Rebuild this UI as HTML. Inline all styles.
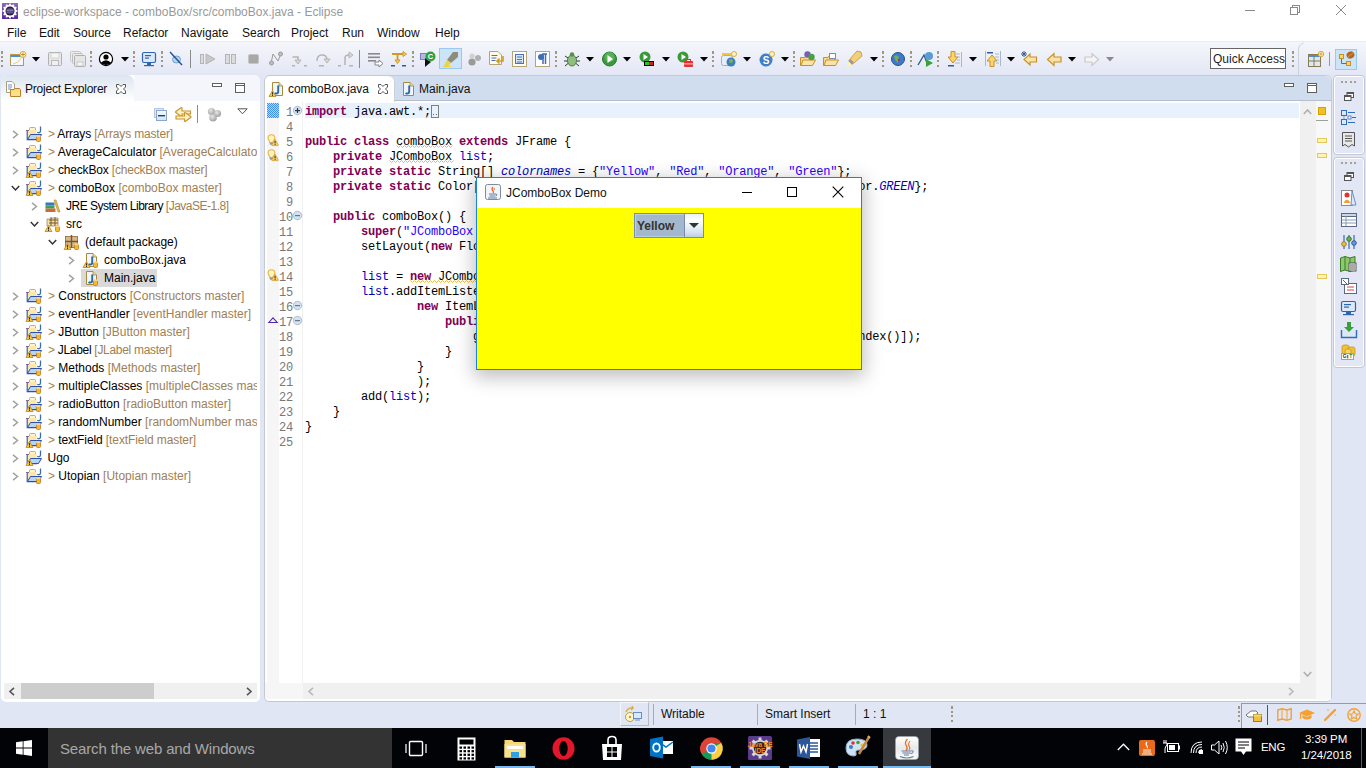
<!DOCTYPE html>
<html><head><meta charset="utf-8"><title>Eclipse</title>
<style>
*{margin:0;padding:0;box-sizing:border-box}
html,body{width:1366px;height:768px;overflow:hidden}
body{position:relative;background:#e1e6f5;font-family:"Liberation Sans",sans-serif;font-size:12px;color:#000}
.a{position:absolute}
.t{position:absolute;white-space:nowrap;line-height:15px}
svg{position:absolute;overflow:visible}
.code,.ln{font-family:"Liberation Mono",monospace;font-size:12px;letter-spacing:-0.2px;line-height:15px;white-space:pre;position:absolute}
.ln{color:#787878;text-align:right;width:30px}
.k{color:#7f0055;font-weight:bold}
.f{color:#0000c0}
.fi{color:#0000c0;font-style:italic}
.fb{color:#0000c0;font-style:italic}
.s{color:#2a00ff}
.sq{}
.tr{position:absolute;white-space:nowrap;line-height:18px;height:18px}
.dec{color:#a08052}
</style></head><body>
<div class="a" style="left:0px;top:0px;width:1366px;height:41px;background:#fff"></div>
<svg style="left:2px;top:3px" width="16" height="16" viewBox="0 0 16 16"><defs><linearGradient id="eg" x1="0" y1="0" x2="0" y2="1"><stop offset="0" stop-color="#8a6cb8"/><stop offset="1" stop-color="#5428a0"/></linearGradient></defs><rect x="0" y="0" width="16" height="16" fill="url(#eg)"/><circle cx="8" cy="8" r="6.2" fill="#fff"/><rect x="7.1" y="0.6" width="1.8" height="2.4" fill="#fff" transform="rotate(0 8 8)"/><rect x="7.1" y="0.6" width="1.8" height="2.4" fill="#fff" transform="rotate(30 8 8)"/><rect x="7.1" y="0.6" width="1.8" height="2.4" fill="#fff" transform="rotate(60 8 8)"/><rect x="7.1" y="0.6" width="1.8" height="2.4" fill="#fff" transform="rotate(90 8 8)"/><rect x="7.1" y="0.6" width="1.8" height="2.4" fill="#fff" transform="rotate(120 8 8)"/><rect x="7.1" y="0.6" width="1.8" height="2.4" fill="#fff" transform="rotate(150 8 8)"/><rect x="7.1" y="0.6" width="1.8" height="2.4" fill="#fff" transform="rotate(180 8 8)"/><rect x="7.1" y="0.6" width="1.8" height="2.4" fill="#fff" transform="rotate(210 8 8)"/><rect x="7.1" y="0.6" width="1.8" height="2.4" fill="#fff" transform="rotate(240 8 8)"/><rect x="7.1" y="0.6" width="1.8" height="2.4" fill="#fff" transform="rotate(270 8 8)"/><rect x="7.1" y="0.6" width="1.8" height="2.4" fill="#fff" transform="rotate(300 8 8)"/><rect x="7.1" y="0.6" width="1.8" height="2.4" fill="#fff" transform="rotate(330 8 8)"/><circle cx="8" cy="8" r="4.5" fill="#1a1428"/><circle cx="8" cy="8" r="3.6" fill="#4a3c70"/><rect x="4.4" y="6.6" width="7.2" height="1.1" fill="#9a8cc8"/><rect x="4.5" y="8.6" width="7" height="1" fill="#7a6cb0"/></svg>
<div class="t" style="left:23px;top:5px;color:#999">eclipse-workspace - comboBox/src/comboBox.java - Eclipse</div>
<svg style="left:1245px;top:5px" width="12" height="12" viewBox="0 0 12 12"><rect x="0" y="5" width="10" height="1" fill="#8a8a8a"/></svg>
<svg style="left:1290px;top:5px" width="12" height="12" viewBox="0 0 12 12"><rect x="2.5" y="0.5" width="7" height="7" fill="none" stroke="#8a8a8a"/><rect x="0.5" y="2.5" width="7" height="7" fill="#fff" stroke="#8a8a8a"/></svg>
<svg style="left:1336px;top:5px" width="10" height="10" viewBox="0 0 10 10"><path d="M0 0 L10 10 M10 0 L0 10" stroke="#8a8a8a" stroke-width="1"/></svg>
<div class="t" style="left:7px;top:26px;color:#111">File</div>
<div class="t" style="left:39px;top:26px;color:#111">Edit</div>
<div class="t" style="left:73px;top:26px;color:#111">Source</div>
<div class="t" style="left:123px;top:26px;color:#111">Refactor</div>
<div class="t" style="left:181px;top:26px;color:#111">Navigate</div>
<div class="t" style="left:242px;top:26px;color:#111">Search</div>
<div class="t" style="left:291px;top:26px;color:#111">Project</div>
<div class="t" style="left:342px;top:26px;color:#111">Run</div>
<div class="t" style="left:377px;top:26px;color:#111">Window</div>
<div class="t" style="left:435px;top:26px;color:#111">Help</div>
<div class="a" style="left:0px;top:41px;width:1366px;height:34px;background:linear-gradient(#f5f6fb,#e3e7f5);border-top:1px solid #ebebeb"></div>
<svg style="left:1px;top:51px" width="2" height="16" viewBox="0 0 2 16"><rect x="0" y="0" width="2" height="3" fill="#a09880"/><rect x="0" y="5" width="2" height="2" fill="#a09880"/><rect x="0" y="9" width="2" height="2" fill="#a09880"/><rect x="0" y="14" width="2" height="2" fill="#a09880"/></svg>
<svg style="left:10px;top:51px" width="16" height="16" viewBox="0 0 16 16"><rect x="0.5" y="3.5" width="13" height="11" fill="#f4f8ff" stroke="#b59a4f"/><rect x="1" y="4" width="12" height="2" fill="#4a90d9"/><path d="M3 13 Q9 12 11 7" stroke="#e9d27a" fill="none"/><circle cx="13" cy="3.5" r="3" fill="#fff6c9" stroke="#d9a93a"/><path d="M13 1.5 V5.5 M11 3.5 H15" stroke="#c8902a"/></svg>
<svg style="left:32px;top:57px" width="8" height="5" viewBox="0 0 8 5"><path d="M0 0 H8 L4 4.5 Z" fill="#000"/></svg>
<svg style="left:47px;top:51px" width="16" height="16" viewBox="0 0 16 16"><rect x="1.5" y="1.5" width="13" height="13" rx="1" fill="#e8e8e8" stroke="#b0b0b0"/><rect x="4" y="2" width="8" height="5" fill="#f6f6f6" stroke="#c4c4c4" stroke-width="0.6"/><rect x="4.5" y="9.5" width="7" height="5" fill="#f0f0f0" stroke="#b8b8b8"/></svg>
<svg style="left:70px;top:51px" width="16" height="16" viewBox="0 0 16 16"><rect x="0.5" y="0.5" width="10" height="10" rx="1" fill="#efefef" stroke="#c4c4c4"/><rect x="2.5" y="2.5" width="10" height="10" rx="1" fill="#ececec" stroke="#bdbdbd"/><rect x="4.5" y="4.5" width="11" height="11" rx="1" fill="#e6e6e6" stroke="#b0b0b0"/><rect x="7" y="11" width="6" height="4" fill="#f4f4f4" stroke="#b8b8b8" stroke-width="0.7"/></svg>
<svg style="left:90px;top:51px" width="2" height="16" viewBox="0 0 2 16"><rect x="0" y="0" width="2" height="3" fill="#a09880"/><rect x="0" y="5" width="2" height="2" fill="#a09880"/><rect x="0" y="9" width="2" height="2" fill="#a09880"/><rect x="0" y="14" width="2" height="2" fill="#a09880"/></svg>
<svg style="left:99px;top:51px" width="16" height="16" viewBox="0 0 16 16"><circle cx="7" cy="8" r="6.6" fill="#fff" stroke="#000" stroke-width="1.2"/><circle cx="7" cy="6" r="2.6" fill="#000"/><path d="M1.6 12 Q7 6.5 12.4 12 Q7 16 1.6 12Z" fill="#000"/></svg>
<svg style="left:121px;top:57px" width="8" height="5" viewBox="0 0 8 5"><path d="M0 0 H8 L4 4.5 Z" fill="#000"/></svg>
<svg style="left:133px;top:51px" width="2" height="16" viewBox="0 0 2 16"><rect x="0" y="0" width="2" height="3" fill="#a09880"/><rect x="0" y="5" width="2" height="2" fill="#a09880"/><rect x="0" y="9" width="2" height="2" fill="#a09880"/><rect x="0" y="14" width="2" height="2" fill="#a09880"/></svg>
<svg style="left:142px;top:51px" width="16" height="16" viewBox="0 0 16 16"><rect x="0.5" y="1.5" width="13" height="10" rx="1.5" fill="#dbe8f6" stroke="#2f65b0" stroke-width="1.2"/><rect x="3" y="4" width="6" height="1.2" fill="#2f65b0"/><rect x="3" y="6.5" width="4" height="1.2" fill="#2f65b0"/><rect x="5" y="12" width="4" height="2" fill="#2f65b0"/><rect x="2" y="14" width="10" height="1.2" fill="#2f65b0"/></svg>
<svg style="left:161px;top:51px" width="2" height="16" viewBox="0 0 2 16"><rect x="0" y="0" width="2" height="3" fill="#a09880"/><rect x="0" y="5" width="2" height="2" fill="#a09880"/><rect x="0" y="9" width="2" height="2" fill="#a09880"/><rect x="0" y="14" width="2" height="2" fill="#a09880"/></svg>
<svg style="left:170px;top:51px" width="16" height="16" viewBox="0 0 16 16"><ellipse cx="6.5" cy="8.5" rx="4" ry="3.5" fill="#b9d6ee" stroke="#6aa0cf"/><path d="M0 1 L12 14" stroke="#1f4f9a" stroke-width="1.4"/></svg>
<div class="a" style="left:190px;top:50px;width:1px;height:18px;background:#8c8c8c"></div>
<svg style="left:200px;top:51px" width="16" height="16" viewBox="0 0 16 16"><rect x="0.5" y="3.5" width="3" height="9" fill="#dcdcdc" stroke="#b4b4b4"/><path d="M6 3 L15 8 L6 13Z" fill="#c8c8c8" stroke="#b4b4b4"/></svg>
<svg style="left:225px;top:51px" width="16" height="16" viewBox="0 0 16 16"><rect x="0.5" y="3.5" width="4" height="9" fill="#dcdcdc" stroke="#b4b4b4"/><rect x="6.5" y="3.5" width="4" height="9" fill="#dcdcdc" stroke="#b4b4b4"/></svg>
<svg style="left:248px;top:51px" width="16" height="16" viewBox="0 0 16 16"><rect x="0.5" y="3.5" width="10" height="9" rx="1.5" fill="#a8a8a8" stroke="#c4c4c4"/></svg>
<svg style="left:269px;top:51px" width="16" height="16" viewBox="0 0 16 16"><circle cx="2.5" cy="12" r="2" fill="#c0c0c0" stroke="#999"/><circle cx="11.5" cy="3" r="2" fill="#c0c0c0" stroke="#999"/><path d="M2.5 10 L4 3 L9 10 L11 5" stroke="#999" fill="none"/></svg>
<svg style="left:292px;top:51px" width="16" height="16" viewBox="0 0 16 16"><path d="M0.5 6 H6 V10" stroke="#b4b4b4" fill="none" stroke-width="1.5"/><path d="M3 9 L6 13 L9 9Z" fill="#d8d8d8" stroke="#b4b4b4"/><rect x="0" y="14" width="3" height="1.5" fill="#b4b4b4"/><rect x="12" y="14" width="3" height="1.5" fill="#b4b4b4"/></svg>
<svg style="left:315px;top:51px" width="16" height="16" viewBox="0 0 16 16"><path d="M2 10 Q2 4 7 4 Q12 4 12 9" stroke="#b4b4b4" fill="none" stroke-width="1.5"/><path d="M9 8 L12 12 L15 8Z" fill="#d8d8d8" stroke="#b4b4b4"/><rect x="4" y="14" width="5" height="1.5" fill="#b4b4b4"/></svg>
<svg style="left:338px;top:51px" width="16" height="16" viewBox="0 0 16 16"><path d="M7 14 V7 Q7 4 11 4" stroke="#b4b4b4" fill="none" stroke-width="1.5"/><path d="M11 1 L15 4 L11 7Z" fill="#d8d8d8" stroke="#b4b4b4"/><rect x="0" y="14" width="3" height="1.5" fill="#b4b4b4"/><rect x="11" y="14" width="4" height="1.5" fill="#b4b4b4"/></svg>
<div class="a" style="left:359px;top:50px;width:1px;height:18px;background:#8c8c8c"></div>
<svg style="left:368px;top:51px" width="16" height="16" viewBox="0 0 16 16"><rect x="0" y="2" width="12" height="1.6" fill="#8a8a8a"/><rect x="0" y="5.5" width="12" height="1.6" fill="#8a8a8a"/><rect x="0" y="9" width="8" height="1.6" fill="#8a8a8a"/><path d="M7 11 H11 V9 L15 12.5 L11 16 V14 H7Z" fill="#fff" stroke="#888"/></svg>
<svg style="left:391px;top:51px" width="16" height="16" viewBox="0 0 16 16"><path d="M1 3 H12 M6.5 3 V10" stroke="#d19a25" stroke-width="1.8" fill="none"/><path d="M12 0.5 L15.5 3 L12 5.5Z" fill="#f7d36a" stroke="#d19a25"/><path d="M4 9 L6.5 12.5 L9 9Z" fill="#f7d36a" stroke="#d19a25"/><rect x="0" y="14" width="4" height="1.5" fill="#2f5c9a"/><rect x="11" y="14" width="4" height="1.5" fill="#2f5c9a"/></svg>
<svg style="left:412px;top:51px" width="2" height="16" viewBox="0 0 2 16"><rect x="0" y="0" width="2" height="3" fill="#a09880"/><rect x="0" y="5" width="2" height="2" fill="#a09880"/><rect x="0" y="9" width="2" height="2" fill="#a09880"/><rect x="0" y="14" width="2" height="2" fill="#a09880"/></svg>
<svg style="left:420px;top:51px" width="16" height="16" viewBox="0 0 16 16"><rect x="0.5" y="2.5" width="8" height="6" fill="#b5b8e6" stroke="#7f7fb6"/><path d="M5 7 L5 16 L11 11Z" fill="#111"/><circle cx="10.5" cy="5.5" r="5" fill="#2f9e44"/><text x="10.5" y="8.2" font-size="7.5" font-weight="bold" text-anchor="middle" fill="#fff" font-family="Liberation Sans">C</text></svg>
<div class="a" style="left:439px;top:48px;width:23px;height:21px;background:#cce4f7;border:1px solid #99c9ef"></div>
<svg style="left:443px;top:51px" width="16" height="16" viewBox="0 0 16 16"><path d="M15 1 L10 1 L4 9 L8 12 L15 6Z" fill="#8e8a7c"/><path d="M4 9 L8 12 L5 15 L1 15Z" fill="#f2d23c"/><path d="M0 15.5 H8" stroke="#f2d23c" stroke-width="1.2"/></svg>
<svg style="left:467px;top:51px" width="16" height="16" viewBox="0 0 16 16"><circle cx="5" cy="11" r="3.6" fill="#9a9a9a"/><circle cx="11" cy="7" r="3" fill="#b0b0b0"/><circle cx="5" cy="5" r="2.6" fill="#d0d0d0"/></svg>
<svg style="left:489px;top:51px" width="16" height="16" viewBox="0 0 16 16"><path d="M0.5 0.5 H9 L12.5 4 V13.5 H0.5Z" fill="#fffbe8" stroke="#b5a574"/><rect x="2.5" y="4" width="6" height="1" fill="#4a73b5"/><rect x="2.5" y="6.5" width="5" height="1" fill="#4a73b5"/><rect x="2.5" y="9" width="4" height="1" fill="#4a73b5"/><path d="M14 5 V10 H8 M10.5 7.5 L8 10 L10.5 12.5" stroke="#d19a25" stroke-width="1.6" fill="none"/></svg>
<svg style="left:512px;top:51px" width="16" height="16" viewBox="0 0 16 16"><rect x="0.5" y="0.5" width="14" height="15" fill="#fff" stroke="#b5a574"/><rect x="3.5" y="3.5" width="8" height="9" fill="#dbe6f6" stroke="#4a73b5"/><rect x="5" y="5.5" width="5" height="1" fill="#4a73b5"/><rect x="5" y="8" width="5" height="1" fill="#4a73b5"/><rect x="5" y="10.5" width="5" height="1" fill="#4a73b5"/></svg>
<svg style="left:535px;top:51px" width="16" height="16" viewBox="0 0 16 16"><rect x="0.5" y="0.5" width="14" height="15" fill="#fff" stroke="#b5a574"/><path d="M7 3 H12 M8 3 V13 M10.5 3 V13" stroke="#3e6cb5" stroke-width="1.5"/><circle cx="6" cy="6" r="3" fill="#3e6cb5"/></svg>
<svg style="left:555px;top:51px" width="2" height="16" viewBox="0 0 2 16"><rect x="0" y="0" width="2" height="3" fill="#a09880"/><rect x="0" y="5" width="2" height="2" fill="#a09880"/><rect x="0" y="9" width="2" height="2" fill="#a09880"/><rect x="0" y="14" width="2" height="2" fill="#a09880"/></svg>
<svg style="left:564px;top:51px" width="16" height="16" viewBox="0 0 16 16"><ellipse cx="8" cy="9.5" rx="4.5" ry="5.5" fill="#8fbf7f" stroke="#4e7f3f"/><circle cx="8" cy="3.5" r="2.2" fill="#5a8f4a"/><path d="M1 5 L4 7 M15 5 L12 7 M0 10 H3.5 M16 10 H12.5 M1 15 L4 12.5 M15 15 L12 12.5" stroke="#333" stroke-width="1"/></svg>
<svg style="left:586px;top:57px" width="8" height="5" viewBox="0 0 8 5"><path d="M0 0 H8 L4 4.5 Z" fill="#000"/></svg>
<svg style="left:602px;top:51px" width="16" height="16" viewBox="0 0 16 16"><circle cx="7.5" cy="8" r="7" fill="#3a9a3a" stroke="#2a7a2a"/><circle cx="7.5" cy="6" r="5" fill="#6cc06c" opacity="0.6"/><path d="M5.5 4 L11 8 L5.5 12Z" fill="#fff"/></svg>
<svg style="left:623px;top:57px" width="8" height="5" viewBox="0 0 8 5"><path d="M0 0 H8 L4 4.5 Z" fill="#000"/></svg>
<svg style="left:639px;top:51px" width="16" height="16" viewBox="0 0 16 16"><circle cx="6" cy="6" r="5.5" fill="#3a9a3a"/><path d="M4.5 3 L9 6 L4.5 9Z" fill="#fff"/><rect x="5" y="10" width="10" height="5" fill="#000"/><rect x="6" y="11" width="4" height="3" fill="#27c227"/><rect x="10" y="11" width="4" height="3" fill="#d32020"/></svg>
<svg style="left:662px;top:57px" width="8" height="5" viewBox="0 0 8 5"><path d="M0 0 H8 L4 4.5 Z" fill="#000"/></svg>
<svg style="left:677px;top:51px" width="16" height="16" viewBox="0 0 16 16"><circle cx="6" cy="6" r="5.5" fill="#3a9a3a"/><path d="M4.5 3 L9 6 L4.5 9Z" fill="#fff"/><rect x="7" y="10" width="9" height="6" rx="1" fill="#e53030"/><rect x="9.5" y="8.5" width="4" height="2" fill="none" stroke="#e53030"/><rect x="7" y="12.5" width="9" height="0.8" fill="#fff"/></svg>
<svg style="left:700px;top:57px" width="8" height="5" viewBox="0 0 8 5"><path d="M0 0 H8 L4 4.5 Z" fill="#000"/></svg>
<svg style="left:712px;top:51px" width="2" height="16" viewBox="0 0 2 16"><rect x="0" y="0" width="2" height="3" fill="#a09880"/><rect x="0" y="5" width="2" height="2" fill="#a09880"/><rect x="0" y="9" width="2" height="2" fill="#a09880"/><rect x="0" y="14" width="2" height="2" fill="#a09880"/></svg>
<svg style="left:721px;top:51px" width="16" height="16" viewBox="0 0 16 16"><rect x="0.5" y="4.5" width="11" height="10" rx="2" fill="#e8eef8" stroke="#9bb0cc"/><rect x="1" y="2" width="9" height="2" fill="#f0c64a"/><circle cx="10" cy="11" r="4.5" fill="#3b7fc4"/><circle cx="10" cy="10" r="2" fill="#7ab648"/><circle cx="13" cy="3" r="2.5" fill="#fff6c9" stroke="#d9a93a"/></svg>
<svg style="left:743px;top:57px" width="8" height="5" viewBox="0 0 8 5"><path d="M0 0 H8 L4 4.5 Z" fill="#000"/></svg>
<svg style="left:759px;top:51px" width="16" height="16" viewBox="0 0 16 16"><circle cx="7" cy="9" r="6.5" fill="#3f7fc8"/><text x="7" y="13" font-size="10" font-weight="bold" text-anchor="middle" fill="#fff" font-family="Liberation Sans">S</text><circle cx="13" cy="3" r="2.5" fill="#fff6c9" stroke="#d9a93a"/></svg>
<svg style="left:781px;top:57px" width="8" height="5" viewBox="0 0 8 5"><path d="M0 0 H8 L4 4.5 Z" fill="#000"/></svg>
<svg style="left:793px;top:51px" width="2" height="16" viewBox="0 0 2 16"><rect x="0" y="0" width="2" height="3" fill="#a09880"/><rect x="0" y="5" width="2" height="2" fill="#a09880"/><rect x="0" y="9" width="2" height="2" fill="#a09880"/><rect x="0" y="14" width="2" height="2" fill="#a09880"/></svg>
<svg style="left:800px;top:51px" width="16" height="16" viewBox="0 0 16 16"><path d="M0.5 6.5 H5 L6 5 H12 V14.5 H0.5Z" fill="#f7d88c" stroke="#c8902a"/><path d="M1 14.5 L3 9 H15.5 L12.5 14.5Z" fill="#fbe3a6" stroke="#c8902a"/><circle cx="7.5" cy="3.5" r="3.2" fill="#7b5eb0"/><circle cx="11.5" cy="6" r="3.2" fill="#4aa04a"/></svg>
<svg style="left:823px;top:51px" width="16" height="16" viewBox="0 0 16 16"><path d="M0.5 6.5 H5 L6 5 H12 V14.5 H0.5Z" fill="#f7d88c" stroke="#c8902a"/><path d="M1 14.5 L3 9 H15.5 L12.5 14.5Z" fill="#fbe3a6" stroke="#c8902a"/><rect x="6.5" y="2.5" width="6" height="5" fill="#fff" stroke="#7d8ea8"/></svg>
<svg style="left:846px;top:51px" width="16" height="16" viewBox="0 0 16 16"><path d="M15 1 L11 0 L4 8 L8 12 L16 5Z" fill="#f3cf7a" stroke="#c8902a" stroke-width="0.8"/><path d="M4 8 L8 12 L6 14 L2 10Z" fill="#9a9a9a"/><path d="M2 10 L6 14 L1 16Z" fill="#fff3b0"/></svg>
<svg style="left:870px;top:57px" width="8" height="5" viewBox="0 0 8 5"><path d="M0 0 H8 L4 4.5 Z" fill="#000"/></svg>
<svg style="left:882px;top:51px" width="2" height="16" viewBox="0 0 2 16"><rect x="0" y="0" width="2" height="3" fill="#a09880"/><rect x="0" y="5" width="2" height="2" fill="#a09880"/><rect x="0" y="9" width="2" height="2" fill="#a09880"/><rect x="0" y="14" width="2" height="2" fill="#a09880"/></svg>
<svg style="left:891px;top:51px" width="16" height="16" viewBox="0 0 16 16"><circle cx="7" cy="8" r="6.5" fill="#3f79c9" stroke="#29518a"/><path d="M3 5 Q6 3 8 6 Q6 9 7 12 Q4 10 3 5Z" fill="#6fb34a"/><circle cx="8" cy="9" r="1" fill="#d02020"/></svg>
<svg style="left:910px;top:51px" width="2" height="16" viewBox="0 0 2 16"><rect x="0" y="0" width="2" height="3" fill="#a09880"/><rect x="0" y="5" width="2" height="2" fill="#a09880"/><rect x="0" y="9" width="2" height="2" fill="#a09880"/><rect x="0" y="14" width="2" height="2" fill="#a09880"/></svg>
<svg style="left:918px;top:51px" width="16" height="16" viewBox="0 0 16 16"><path d="M0 14 L6 4 L9 12" stroke="#2f5c9a" stroke-width="1.4" fill="none"/><circle cx="11" cy="5" r="4" fill="#5b9bd5"/><path d="M8 8 L15 12 L8 16Z" fill="#3aa03a"/></svg>
<svg style="left:937px;top:51px" width="2" height="16" viewBox="0 0 2 16"><rect x="0" y="0" width="2" height="3" fill="#a09880"/><rect x="0" y="5" width="2" height="2" fill="#a09880"/><rect x="0" y="9" width="2" height="2" fill="#a09880"/><rect x="0" y="14" width="2" height="2" fill="#a09880"/></svg>
<svg style="left:946px;top:51px" width="16" height="16" viewBox="0 0 16 16"><path d="M5 0.5 H9 V6 H12 L7 12 L2 6 H5Z" fill="#fbd568" stroke="#c8902a"/><rect x="2" y="14" width="6" height="1.5" fill="#2f5c9a"/><path d="M10 3 H14 M11 6 H14 M11 9 H14 M9 12 H14" stroke="#a9b8cc"/><rect x="15" y="1" width="1" height="15" fill="#a9b8cc"/></svg>
<svg style="left:969px;top:57px" width="8" height="5" viewBox="0 0 8 5"><path d="M0 0 H8 L4 4.5 Z" fill="#000"/></svg>
<svg style="left:985px;top:51px" width="16" height="16" viewBox="0 0 16 16"><path d="M5 15.5 H9 V10 H12 L7 4 L2 10 H5Z" fill="#fbd568" stroke="#c8902a"/><rect x="2" y="1" width="6" height="1.5" fill="#2f5c9a"/><path d="M10 3 H14 M10 6 H14 M11 9 H14 M11 12 H14" stroke="#a9b8cc"/><rect x="0" y="0" width="1" height="15" fill="#a9b8cc"/><rect x="15" y="0" width="1" height="15" fill="#a9b8cc"/></svg>
<svg style="left:1007px;top:57px" width="8" height="5" viewBox="0 0 8 5"><path d="M0 0 H8 L4 4.5 Z" fill="#000"/></svg>
<svg style="left:1021px;top:51px" width="16" height="16" viewBox="0 0 16 16"><path d="M15.5 6 H9 V3 L3 8.5 L9 14 V11 H15.5Z" fill="#fbe3a6" stroke="#c8902a" stroke-width="1.2"/><path d="M1 1 L5 5 M5 1 L1 5 M3 0 V6 M0 3 H6" stroke="#2f5c9a"/></svg>
<svg style="left:1046px;top:51px" width="16" height="16" viewBox="0 0 16 16"><path d="M15 6 H8 V2.5 L1.5 8.5 L8 14.5 V11 H15Z" fill="#fbe3a6" stroke="#c8902a" stroke-width="1.2"/></svg>
<svg style="left:1068px;top:57px" width="8" height="5" viewBox="0 0 8 5"><path d="M0 0 H8 L4 4.5 Z" fill="#000"/></svg>
<svg style="left:1084px;top:51px" width="16" height="16" viewBox="0 0 16 16"><path d="M1 6 H8 V2.5 L14.5 8.5 L8 14.5 V11 H1Z" fill="#f4f4f4" stroke="#c8c8c8" stroke-width="1.2"/></svg>
<svg style="left:1106px;top:57px" width="8" height="5" viewBox="0 0 8 5"><path d="M0 0 H8 L4 4.5 Z" fill="#8a8a8a"/></svg>
<div class="a" style="left:1210px;top:48px;width:76px;height:21px;background:#fff;border:1px solid #666"></div>
<div class="t" style="left:1213px;top:52px;color:#222">Quick Access</div>
<svg style="left:1292px;top:51px" width="2" height="16" viewBox="0 0 2 16"><rect x="0" y="0" width="2" height="3" fill="#a09880"/><rect x="0" y="5" width="2" height="2" fill="#a09880"/><rect x="0" y="9" width="2" height="2" fill="#a09880"/><rect x="0" y="14" width="2" height="2" fill="#a09880"/></svg>
<svg style="left:1298px;top:43px" width="6" height="32" viewBox="0 0 6 32"><path d="M5.5 0 Q0.5 2 0.5 7 V32" stroke="#cdd1dc" fill="none"/></svg>
<svg style="left:1308px;top:51px" width="16" height="16" viewBox="0 0 16 16"><rect x="0.5" y="3.5" width="12" height="12" fill="#dbe8f6" stroke="#8a7a50"/><rect x="1" y="4" width="11" height="2" fill="#4a90d9"/><path d="M6 4 V15 M1 10 H12" stroke="#8a7a50"/><circle cx="13" cy="3" r="2.7" fill="#fff6c9" stroke="#d9a93a"/><path d="M13 1.3 V4.7 M11.3 3 H14.7" stroke="#c8902a" stroke-width="0.8"/></svg>
<div class="a" style="left:1329px;top:52px;width:1px;height:14px;background:#999"></div>
<div class="a" style="left:1335px;top:49px;width:22px;height:21px;background:#cce4f7;border:1px solid #99c9ef"></div>
<svg style="left:1339px;top:51px" width="16" height="16" viewBox="0 0 16 16"><rect x="0.5" y="3.5" width="4" height="4" fill="#fbd568" stroke="#c8902a"/><rect x="7.5" y="10.5" width="4" height="4" fill="#fbd568" stroke="#c8902a"/><path d="M2.5 8 V12.5 H7.5" stroke="#8a6a30" fill="none"/><ellipse cx="11.5" cy="4" rx="4" ry="3.5" fill="#b5651d" transform="rotate(-30 11.5 4)"/><path d="M9 6 L14 2" stroke="#e6a060" stroke-width="0.8"/></svg>
<div class="a" style="left:1px;top:75px;width:259px;height:627px;background:#fff;border-radius:6px 6px 5px 5px;overflow:hidden"></div>
<div class="a" style="left:134px;top:75px;width:126px;height:26px;background:#f4f6fb;border-radius:0 6px 0 0"></div>
<div class="a" style="left:1px;top:75px;width:133px;height:26px;background:linear-gradient(#dce5ef,#ffffff);border-radius:6px 7px 0 0"></div>
<svg style="left:6px;top:81px" width="16" height="16" viewBox="0 0 16 16"><path d="M0.5 0.5 H6 L8.5 3 V11.5 H0.5Z" fill="#fff" stroke="#aaa080"/><path d="M2 4 H6 M2 6 H6 M2 8 H5" stroke="#6a8fc8"/><path d="M4.5 8.5 H8 L9 7.5 H13.5 L14.5 8.5 V15.5 H4.5Z" fill="#f9d774" stroke="#b8832a"/><rect x="5" y="10" width="9" height="5" fill="#fbe08c"/></svg>
<div class="t" style="left:25px;top:82px;color:#111;letter-spacing:-0.2px">Project Explorer</div>
<svg style="left:116px;top:84px" width="10" height="10" viewBox="0 0 10 10"><path d="M0.5 0.5 H3 L5 2.5 L7 0.5 H9.5 V3 L7.5 5 L9.5 7 V9.5 H7 L5 7.5 L3 9.5 H0.5 V7 L2.5 5 L0.5 3 Z" fill="#fff" stroke="#555" stroke-width="1"/></svg>
<svg style="left:212px;top:83px" width="10" height="4" viewBox="0 0 10 4"><rect x="0.5" y="0.5" width="9" height="3" fill="#fff" stroke="#606060"/></svg>
<svg style="left:235px;top:83px" width="10" height="10" viewBox="0 0 10 10"><rect x="0.5" y="0.5" width="9" height="9" fill="#fff" stroke="#606060"/><path d="M0 2.5 H10" stroke="#606060"/></svg>
<svg style="left:154px;top:108px" width="13" height="13" viewBox="0 0 13 13"><defs><linearGradient id="cg" x1="0" y1="0" x2="0" y2="1"><stop offset="0" stop-color="#f4f9ff"/><stop offset="1" stop-color="#cfe6fa"/></linearGradient></defs><rect x="0.5" y="0.5" width="9" height="9" fill="#dce8f8" stroke="#b4c6e2"/><rect x="2.5" y="2.5" width="10" height="10" fill="url(#cg)" stroke="#8ea6cc"/><rect x="4" y="7" width="7" height="1.4" fill="#1d3f73"/></svg>
<svg style="left:175px;top:106px" width="17" height="16" viewBox="0 0 17 16"><path d="M15.5 5 H7 V2.5 Q7 1 6 1.8 L0.8 5.5 Q0 6 0.8 6.5 L6 10.2 Q7 11 7 9.5 V8 H15.5Z" fill="#fff0c8" stroke="#c89228" stroke-width="1.1"/><path d="M1 10 H9.5 V7.5 Q9.5 6 10.5 6.8 L15.7 10.5 Q16.5 11 15.7 11.5 L10.5 15.2 Q9.5 16 9.5 14.5 V13 H1Z" fill="#fff0c8" stroke="#c89228" stroke-width="1.1"/></svg>
<div class="a" style="left:197px;top:105px;width:1px;height:18px;background:#8a8a8a"></div>
<svg style="left:207px;top:107px" width="15" height="15" viewBox="0 0 15 15"><defs><radialGradient id="bg1" cx="0.4" cy="0.35" r="0.7"><stop offset="0" stop-color="#e6e6e6"/><stop offset="1" stop-color="#9c9c9c"/></radialGradient></defs><circle cx="4.5" cy="4.5" r="3.6" fill="url(#bg1)"/><circle cx="10.5" cy="6.5" r="3.6" fill="url(#bg1)"/><circle cx="6" cy="10.8" r="3.8" fill="url(#bg1)"/></svg>
<svg style="left:237px;top:108px" width="12" height="7" viewBox="0 0 12 7"><path d="M0.8 0.8 H10.2 L5.5 5.8Z" fill="#fff" stroke="#555"/></svg>
<div class="a" style="left:0;top:0;width:257px;height:700px;overflow:hidden"><svg style="left:12.0px;top:130px" width="7" height="9" viewBox="0 0 7 9"><path d="M1 0.8 L5.5 4.5 L1 8.2" stroke="#a0a0a0" stroke-width="1.5" fill="none"/></svg>
<svg style="left:26px;top:126px" width="16" height="16" viewBox="0 0 16 16"><path d="M3.5 4.5 V2.5 Q3.5 1.5 4.5 1.5 H8.5 Q9.5 1.5 9.5 2.5 V4.5" fill="#fdf3cf" stroke="#c9a24a" stroke-width="0.9"/><rect x="1.5" y="4" width="9" height="9.5" fill="#fbe7a8"/><path d="M0 4.5 H3" stroke="#7a6a90" stroke-width="1"/><path d="M1.2 5 V13.8 H11" stroke="#2d4fb0" stroke-width="1.1" fill="none"/><path d="M1.5 13.5 L4.5 8.5 H15.5 L12.5 13.5Z" fill="#b6d4f6" stroke="#2d4fb0" stroke-width="1"/><path d="M14.5 0.5 V5 Q14.5 6.8 12.8 6.8 Q11.8 6.8 11.3 6" stroke="#3a6ea8" stroke-width="1.3" fill="none"/><rect x="10.5" y="10.5" width="4" height="5" rx="1" fill="#f7b733" stroke="#b77a1a" stroke-width="0.8"/><rect x="10.5" y="9.5" width="4" height="1.5" fill="#fbd67a"/></svg>
<div class="tr" style="left:48px;top:125px;color:#000;letter-spacing:-0.17px"><span class="dec">&gt; </span>Arrays <span class="dec">[Arrays master]</span></div>
<svg style="left:12.0px;top:148px" width="7" height="9" viewBox="0 0 7 9"><path d="M1 0.8 L5.5 4.5 L1 8.2" stroke="#a0a0a0" stroke-width="1.5" fill="none"/></svg>
<svg style="left:26px;top:144px" width="16" height="16" viewBox="0 0 16 16"><path d="M3.5 4.5 V2.5 Q3.5 1.5 4.5 1.5 H8.5 Q9.5 1.5 9.5 2.5 V4.5" fill="#fdf3cf" stroke="#c9a24a" stroke-width="0.9"/><rect x="1.5" y="4" width="9" height="9.5" fill="#fbe7a8"/><path d="M0 4.5 H3" stroke="#7a6a90" stroke-width="1"/><path d="M1.2 5 V13.8 H11" stroke="#2d4fb0" stroke-width="1.1" fill="none"/><path d="M1.5 13.5 L4.5 8.5 H15.5 L12.5 13.5Z" fill="#b6d4f6" stroke="#2d4fb0" stroke-width="1"/><path d="M14.5 0.5 V5 Q14.5 6.8 12.8 6.8 Q11.8 6.8 11.3 6" stroke="#3a6ea8" stroke-width="1.3" fill="none"/><rect x="10.5" y="10.5" width="4" height="5" rx="1" fill="#f7b733" stroke="#b77a1a" stroke-width="0.8"/><rect x="10.5" y="9.5" width="4" height="1.5" fill="#fbd67a"/></svg>
<div class="tr" style="left:48px;top:143px;color:#000;letter-spacing:0px"><span class="dec">&gt; </span>AverageCalculator <span class="dec">[AverageCalculator master]</span></div>
<svg style="left:12.0px;top:166px" width="7" height="9" viewBox="0 0 7 9"><path d="M1 0.8 L5.5 4.5 L1 8.2" stroke="#a0a0a0" stroke-width="1.5" fill="none"/></svg>
<svg style="left:26px;top:162px" width="16" height="16" viewBox="0 0 16 16"><path d="M3.5 4.5 V2.5 Q3.5 1.5 4.5 1.5 H8.5 Q9.5 1.5 9.5 2.5 V4.5" fill="#fdf3cf" stroke="#c9a24a" stroke-width="0.9"/><rect x="1.5" y="4" width="9" height="9.5" fill="#fbe7a8"/><path d="M0 4.5 H3" stroke="#7a6a90" stroke-width="1"/><path d="M1.2 5 V13.8 H11" stroke="#2d4fb0" stroke-width="1.1" fill="none"/><path d="M1.5 13.5 L4.5 8.5 H15.5 L12.5 13.5Z" fill="#b6d4f6" stroke="#2d4fb0" stroke-width="1"/><path d="M14.5 0.5 V5 Q14.5 6.8 12.8 6.8 Q11.8 6.8 11.3 6" stroke="#3a6ea8" stroke-width="1.3" fill="none"/><rect x="10.5" y="10.5" width="4" height="5" rx="1" fill="#f7b733" stroke="#b77a1a" stroke-width="0.8"/><rect x="10.5" y="9.5" width="4" height="1.5" fill="#fbd67a"/><path d="M3.5 9.5 L7 15.5 H0 Z" fill="#f7c548" stroke="#b98a1c" stroke-width="0.8" stroke-linejoin="round"/><rect x="3" y="11.3" width="1" height="2.2" fill="#222"/><rect x="3" y="14" width="1" height="0.9" fill="#222"/></svg>
<div class="tr" style="left:48px;top:161px;color:#000;letter-spacing:-0.18px"><span class="dec">&gt; </span>checkBox <span class="dec">[checkBox master]</span></div>
<svg style="left:11.0px;top:185px" width="9" height="7" viewBox="0 0 9 7"><path d="M0.8 1 L4.5 5 L8.2 1" stroke="#333" stroke-width="1.5" fill="none"/></svg>
<svg style="left:26px;top:180px" width="16" height="16" viewBox="0 0 16 16"><path d="M3.5 4.5 V2.5 Q3.5 1.5 4.5 1.5 H8.5 Q9.5 1.5 9.5 2.5 V4.5" fill="#fdf3cf" stroke="#c9a24a" stroke-width="0.9"/><rect x="1.5" y="4" width="9" height="9.5" fill="#fbe7a8"/><path d="M0 4.5 H3" stroke="#7a6a90" stroke-width="1"/><path d="M1.2 5 V13.8 H11" stroke="#2d4fb0" stroke-width="1.1" fill="none"/><path d="M1.5 13.5 L4.5 8.5 H15.5 L12.5 13.5Z" fill="#b6d4f6" stroke="#2d4fb0" stroke-width="1"/><path d="M14.5 0.5 V5 Q14.5 6.8 12.8 6.8 Q11.8 6.8 11.3 6" stroke="#3a6ea8" stroke-width="1.3" fill="none"/><rect x="10.5" y="10.5" width="4" height="5" rx="1" fill="#f7b733" stroke="#b77a1a" stroke-width="0.8"/><rect x="10.5" y="9.5" width="4" height="1.5" fill="#fbd67a"/><path d="M3.5 9.5 L7 15.5 H0 Z" fill="#f7c548" stroke="#b98a1c" stroke-width="0.8" stroke-linejoin="round"/><rect x="3" y="11.3" width="1" height="2.2" fill="#222"/><rect x="3" y="14" width="1" height="0.9" fill="#222"/></svg>
<div class="tr" style="left:48px;top:179px;color:#000;letter-spacing:0px"><span class="dec">&gt; </span>comboBox <span class="dec">[comboBox master]</span></div>
<svg style="left:30.7px;top:202px" width="7" height="9" viewBox="0 0 7 9"><path d="M1 0.8 L5.5 4.5 L1 8.2" stroke="#a0a0a0" stroke-width="1.5" fill="none"/></svg>
<svg style="left:45px;top:198px" width="16" height="16" viewBox="0 0 16 16"><rect x="0.5" y="4.5" width="9" height="3" fill="#3a78b5"/><rect x="0.5" y="7.5" width="9" height="3" fill="#3f9a6a"/><rect x="0.5" y="10.5" width="10" height="3.5" fill="#c66f34"/><path d="M9 2 L11 2 L15 14 L13 14Z" fill="#e9b64a" stroke="#b98a1c" stroke-width="0.6"/></svg>
<div class="tr" style="left:66px;top:197px;color:#000;letter-spacing:-0.5px">JRE System Library <span class="dec">[JavaSE-1.8]</span></div>
<svg style="left:29.7px;top:221px" width="9" height="7" viewBox="0 0 9 7"><path d="M0.8 1 L4.5 5 L8.2 1" stroke="#333" stroke-width="1.5" fill="none"/></svg>
<svg style="left:45px;top:216px" width="16" height="16" viewBox="0 0 16 16"><path d="M2 3 H6 L7 2 H13 V10 H2Z" fill="#f3dfa8" stroke="#9a8a6a" stroke-width="0.8"/><path d="M6 1 V10 M10 1 V10 M4 4 H13 M4 7 H13" stroke="#7a5a2a" stroke-width="1"/><rect x="10.5" y="10.5" width="4" height="5" rx="1" fill="#f7b733" stroke="#b77a1a" stroke-width="0.8"/><rect x="10.5" y="9.5" width="4" height="1.5" fill="#fbd67a"/><path d="M3.5 9.5 L7 15.5 H0 Z" fill="#f7c548" stroke="#b98a1c" stroke-width="0.8" stroke-linejoin="round"/><rect x="3" y="11.3" width="1" height="2.2" fill="#222"/><rect x="3" y="14" width="1" height="0.9" fill="#222"/></svg>
<div class="tr" style="left:66px;top:215px;color:#000;letter-spacing:0px">src</div>
<svg style="left:48.4px;top:239px" width="9" height="7" viewBox="0 0 9 7"><path d="M0.8 1 L4.5 5 L8.2 1" stroke="#333" stroke-width="1.5" fill="none"/></svg>
<svg style="left:64px;top:234px" width="16" height="16" viewBox="0 0 16 16"><rect x="1.5" y="2.5" width="12" height="11" fill="#d8b889" stroke="#8a6a3a" stroke-width="0.8"/><path d="M7.5 1 V14 M1 7.5 H14" stroke="#7a5530" stroke-width="1.4"/><rect x="10.5" y="10.5" width="4" height="5" rx="1" fill="#f7b733" stroke="#b77a1a" stroke-width="0.8"/><rect x="10.5" y="9.5" width="4" height="1.5" fill="#fbd67a"/><path d="M3.5 9.5 L7 15.5 H0 Z" fill="#f7c548" stroke="#b98a1c" stroke-width="0.8" stroke-linejoin="round"/><rect x="3" y="11.3" width="1" height="2.2" fill="#222"/><rect x="3" y="14" width="1" height="0.9" fill="#222"/></svg>
<div class="tr" style="left:85px;top:233px;color:#000;letter-spacing:0px">(default package)</div>
<svg style="left:68.1px;top:256px" width="7" height="9" viewBox="0 0 7 9"><path d="M1 0.8 L5.5 4.5 L1 8.2" stroke="#a0a0a0" stroke-width="1.5" fill="none"/></svg>
<svg style="left:83px;top:252px" width="16" height="16" viewBox="0 0 16 16"><path d="M3.5 1.5 H10 L13.5 5 V14.5 H3.5Z" fill="#eef5fc" stroke="#a88a3a"/><path d="M10 1.5 V5 H13.5" fill="#e8d8a0" stroke="#a88a3a" stroke-width="0.8"/><path d="M9.2 4.5 V10.5 Q9.2 12.6 7.2 12.6 Q6.2 12.6 5.6 12" stroke="#2f6aa5" stroke-width="1.9" fill="none"/><rect x="10.5" y="10.5" width="4" height="5" rx="1" fill="#f7b733" stroke="#b77a1a" stroke-width="0.8"/><rect x="10.5" y="9.5" width="4" height="1.5" fill="#fbd67a"/><path d="M3.5 9.5 L7 15.5 H0 Z" fill="#f7c548" stroke="#b98a1c" stroke-width="0.8" stroke-linejoin="round"/><rect x="3" y="11.3" width="1" height="2.2" fill="#222"/><rect x="3" y="14" width="1" height="0.9" fill="#222"/></svg>
<div class="tr" style="left:104px;top:251px;color:#000;letter-spacing:0px">comboBox.java</div>
<div class="a" style="left:81px;top:269px;width:76px;height:18px;background:#d9d9d9"></div>
<svg style="left:68.1px;top:274px" width="7" height="9" viewBox="0 0 7 9"><path d="M1 0.8 L5.5 4.5 L1 8.2" stroke="#a0a0a0" stroke-width="1.5" fill="none"/></svg>
<svg style="left:83px;top:270px" width="16" height="16" viewBox="0 0 16 16"><path d="M3.5 1.5 H10 L13.5 5 V14.5 H3.5Z" fill="#eef5fc" stroke="#a88a3a"/><path d="M10 1.5 V5 H13.5" fill="#e8d8a0" stroke="#a88a3a" stroke-width="0.8"/><path d="M9.2 4.5 V10.5 Q9.2 12.6 7.2 12.6 Q6.2 12.6 5.6 12" stroke="#2f6aa5" stroke-width="1.9" fill="none"/><rect x="10.5" y="10.5" width="4" height="5" rx="1" fill="#f7b733" stroke="#b77a1a" stroke-width="0.8"/><rect x="10.5" y="9.5" width="4" height="1.5" fill="#fbd67a"/></svg>
<div class="tr" style="left:104px;top:269px;color:#000;letter-spacing:0px">Main.java</div>
<svg style="left:12.0px;top:292px" width="7" height="9" viewBox="0 0 7 9"><path d="M1 0.8 L5.5 4.5 L1 8.2" stroke="#a0a0a0" stroke-width="1.5" fill="none"/></svg>
<svg style="left:26px;top:288px" width="16" height="16" viewBox="0 0 16 16"><path d="M3.5 4.5 V2.5 Q3.5 1.5 4.5 1.5 H8.5 Q9.5 1.5 9.5 2.5 V4.5" fill="#fdf3cf" stroke="#c9a24a" stroke-width="0.9"/><rect x="1.5" y="4" width="9" height="9.5" fill="#fbe7a8"/><path d="M0 4.5 H3" stroke="#7a6a90" stroke-width="1"/><path d="M1.2 5 V13.8 H11" stroke="#2d4fb0" stroke-width="1.1" fill="none"/><path d="M1.5 13.5 L4.5 8.5 H15.5 L12.5 13.5Z" fill="#b6d4f6" stroke="#2d4fb0" stroke-width="1"/><path d="M14.5 0.5 V5 Q14.5 6.8 12.8 6.8 Q11.8 6.8 11.3 6" stroke="#3a6ea8" stroke-width="1.3" fill="none"/><rect x="10.5" y="10.5" width="4" height="5" rx="1" fill="#f7b733" stroke="#b77a1a" stroke-width="0.8"/><rect x="10.5" y="9.5" width="4" height="1.5" fill="#fbd67a"/></svg>
<div class="tr" style="left:48px;top:287px;color:#000;letter-spacing:0px"><span class="dec">&gt; </span>Constructors <span class="dec">[Constructors master]</span></div>
<svg style="left:12.0px;top:310px" width="7" height="9" viewBox="0 0 7 9"><path d="M1 0.8 L5.5 4.5 L1 8.2" stroke="#a0a0a0" stroke-width="1.5" fill="none"/></svg>
<svg style="left:26px;top:306px" width="16" height="16" viewBox="0 0 16 16"><path d="M3.5 4.5 V2.5 Q3.5 1.5 4.5 1.5 H8.5 Q9.5 1.5 9.5 2.5 V4.5" fill="#fdf3cf" stroke="#c9a24a" stroke-width="0.9"/><rect x="1.5" y="4" width="9" height="9.5" fill="#fbe7a8"/><path d="M0 4.5 H3" stroke="#7a6a90" stroke-width="1"/><path d="M1.2 5 V13.8 H11" stroke="#2d4fb0" stroke-width="1.1" fill="none"/><path d="M1.5 13.5 L4.5 8.5 H15.5 L12.5 13.5Z" fill="#b6d4f6" stroke="#2d4fb0" stroke-width="1"/><path d="M14.5 0.5 V5 Q14.5 6.8 12.8 6.8 Q11.8 6.8 11.3 6" stroke="#3a6ea8" stroke-width="1.3" fill="none"/><rect x="10.5" y="10.5" width="4" height="5" rx="1" fill="#f7b733" stroke="#b77a1a" stroke-width="0.8"/><rect x="10.5" y="9.5" width="4" height="1.5" fill="#fbd67a"/><path d="M3.5 9.5 L7 15.5 H0 Z" fill="#f7c548" stroke="#b98a1c" stroke-width="0.8" stroke-linejoin="round"/><rect x="3" y="11.3" width="1" height="2.2" fill="#222"/><rect x="3" y="14" width="1" height="0.9" fill="#222"/></svg>
<div class="tr" style="left:48px;top:305px;color:#000;letter-spacing:0px"><span class="dec">&gt; </span>eventHandler <span class="dec">[eventHandler master]</span></div>
<svg style="left:12.0px;top:328px" width="7" height="9" viewBox="0 0 7 9"><path d="M1 0.8 L5.5 4.5 L1 8.2" stroke="#a0a0a0" stroke-width="1.5" fill="none"/></svg>
<svg style="left:26px;top:324px" width="16" height="16" viewBox="0 0 16 16"><path d="M3.5 4.5 V2.5 Q3.5 1.5 4.5 1.5 H8.5 Q9.5 1.5 9.5 2.5 V4.5" fill="#fdf3cf" stroke="#c9a24a" stroke-width="0.9"/><rect x="1.5" y="4" width="9" height="9.5" fill="#fbe7a8"/><path d="M0 4.5 H3" stroke="#7a6a90" stroke-width="1"/><path d="M1.2 5 V13.8 H11" stroke="#2d4fb0" stroke-width="1.1" fill="none"/><path d="M1.5 13.5 L4.5 8.5 H15.5 L12.5 13.5Z" fill="#b6d4f6" stroke="#2d4fb0" stroke-width="1"/><path d="M14.5 0.5 V5 Q14.5 6.8 12.8 6.8 Q11.8 6.8 11.3 6" stroke="#3a6ea8" stroke-width="1.3" fill="none"/><rect x="10.5" y="10.5" width="4" height="5" rx="1" fill="#f7b733" stroke="#b77a1a" stroke-width="0.8"/><rect x="10.5" y="9.5" width="4" height="1.5" fill="#fbd67a"/><path d="M3.5 9.5 L7 15.5 H0 Z" fill="#f7c548" stroke="#b98a1c" stroke-width="0.8" stroke-linejoin="round"/><rect x="3" y="11.3" width="1" height="2.2" fill="#222"/><rect x="3" y="14" width="1" height="0.9" fill="#222"/></svg>
<div class="tr" style="left:48px;top:323px;color:#000;letter-spacing:0px"><span class="dec">&gt; </span>JButton <span class="dec">[JButton master]</span></div>
<svg style="left:12.0px;top:346px" width="7" height="9" viewBox="0 0 7 9"><path d="M1 0.8 L5.5 4.5 L1 8.2" stroke="#a0a0a0" stroke-width="1.5" fill="none"/></svg>
<svg style="left:26px;top:342px" width="16" height="16" viewBox="0 0 16 16"><path d="M3.5 4.5 V2.5 Q3.5 1.5 4.5 1.5 H8.5 Q9.5 1.5 9.5 2.5 V4.5" fill="#fdf3cf" stroke="#c9a24a" stroke-width="0.9"/><rect x="1.5" y="4" width="9" height="9.5" fill="#fbe7a8"/><path d="M0 4.5 H3" stroke="#7a6a90" stroke-width="1"/><path d="M1.2 5 V13.8 H11" stroke="#2d4fb0" stroke-width="1.1" fill="none"/><path d="M1.5 13.5 L4.5 8.5 H15.5 L12.5 13.5Z" fill="#b6d4f6" stroke="#2d4fb0" stroke-width="1"/><path d="M14.5 0.5 V5 Q14.5 6.8 12.8 6.8 Q11.8 6.8 11.3 6" stroke="#3a6ea8" stroke-width="1.3" fill="none"/><rect x="10.5" y="10.5" width="4" height="5" rx="1" fill="#f7b733" stroke="#b77a1a" stroke-width="0.8"/><rect x="10.5" y="9.5" width="4" height="1.5" fill="#fbd67a"/><path d="M3.5 9.5 L7 15.5 H0 Z" fill="#f7c548" stroke="#b98a1c" stroke-width="0.8" stroke-linejoin="round"/><rect x="3" y="11.3" width="1" height="2.2" fill="#222"/><rect x="3" y="14" width="1" height="0.9" fill="#222"/></svg>
<div class="tr" style="left:48px;top:341px;color:#000;letter-spacing:-0.3px"><span class="dec">&gt; </span>JLabel <span class="dec">[JLabel master]</span></div>
<svg style="left:12.0px;top:364px" width="7" height="9" viewBox="0 0 7 9"><path d="M1 0.8 L5.5 4.5 L1 8.2" stroke="#a0a0a0" stroke-width="1.5" fill="none"/></svg>
<svg style="left:26px;top:360px" width="16" height="16" viewBox="0 0 16 16"><path d="M3.5 4.5 V2.5 Q3.5 1.5 4.5 1.5 H8.5 Q9.5 1.5 9.5 2.5 V4.5" fill="#fdf3cf" stroke="#c9a24a" stroke-width="0.9"/><rect x="1.5" y="4" width="9" height="9.5" fill="#fbe7a8"/><path d="M0 4.5 H3" stroke="#7a6a90" stroke-width="1"/><path d="M1.2 5 V13.8 H11" stroke="#2d4fb0" stroke-width="1.1" fill="none"/><path d="M1.5 13.5 L4.5 8.5 H15.5 L12.5 13.5Z" fill="#b6d4f6" stroke="#2d4fb0" stroke-width="1"/><path d="M14.5 0.5 V5 Q14.5 6.8 12.8 6.8 Q11.8 6.8 11.3 6" stroke="#3a6ea8" stroke-width="1.3" fill="none"/><rect x="10.5" y="10.5" width="4" height="5" rx="1" fill="#f7b733" stroke="#b77a1a" stroke-width="0.8"/><rect x="10.5" y="9.5" width="4" height="1.5" fill="#fbd67a"/></svg>
<div class="tr" style="left:48px;top:359px;color:#000;letter-spacing:0px"><span class="dec">&gt; </span>Methods <span class="dec">[Methods master]</span></div>
<svg style="left:12.0px;top:382px" width="7" height="9" viewBox="0 0 7 9"><path d="M1 0.8 L5.5 4.5 L1 8.2" stroke="#a0a0a0" stroke-width="1.5" fill="none"/></svg>
<svg style="left:26px;top:378px" width="16" height="16" viewBox="0 0 16 16"><path d="M3.5 4.5 V2.5 Q3.5 1.5 4.5 1.5 H8.5 Q9.5 1.5 9.5 2.5 V4.5" fill="#fdf3cf" stroke="#c9a24a" stroke-width="0.9"/><rect x="1.5" y="4" width="9" height="9.5" fill="#fbe7a8"/><path d="M0 4.5 H3" stroke="#7a6a90" stroke-width="1"/><path d="M1.2 5 V13.8 H11" stroke="#2d4fb0" stroke-width="1.1" fill="none"/><path d="M1.5 13.5 L4.5 8.5 H15.5 L12.5 13.5Z" fill="#b6d4f6" stroke="#2d4fb0" stroke-width="1"/><path d="M14.5 0.5 V5 Q14.5 6.8 12.8 6.8 Q11.8 6.8 11.3 6" stroke="#3a6ea8" stroke-width="1.3" fill="none"/><rect x="10.5" y="10.5" width="4" height="5" rx="1" fill="#f7b733" stroke="#b77a1a" stroke-width="0.8"/><rect x="10.5" y="9.5" width="4" height="1.5" fill="#fbd67a"/></svg>
<div class="tr" style="left:48px;top:377px;color:#000;letter-spacing:0px"><span class="dec">&gt; </span>multipleClasses <span class="dec">[multipleClasses master]</span></div>
<svg style="left:12.0px;top:400px" width="7" height="9" viewBox="0 0 7 9"><path d="M1 0.8 L5.5 4.5 L1 8.2" stroke="#a0a0a0" stroke-width="1.5" fill="none"/></svg>
<svg style="left:26px;top:396px" width="16" height="16" viewBox="0 0 16 16"><path d="M3.5 4.5 V2.5 Q3.5 1.5 4.5 1.5 H8.5 Q9.5 1.5 9.5 2.5 V4.5" fill="#fdf3cf" stroke="#c9a24a" stroke-width="0.9"/><rect x="1.5" y="4" width="9" height="9.5" fill="#fbe7a8"/><path d="M0 4.5 H3" stroke="#7a6a90" stroke-width="1"/><path d="M1.2 5 V13.8 H11" stroke="#2d4fb0" stroke-width="1.1" fill="none"/><path d="M1.5 13.5 L4.5 8.5 H15.5 L12.5 13.5Z" fill="#b6d4f6" stroke="#2d4fb0" stroke-width="1"/><path d="M14.5 0.5 V5 Q14.5 6.8 12.8 6.8 Q11.8 6.8 11.3 6" stroke="#3a6ea8" stroke-width="1.3" fill="none"/><rect x="10.5" y="10.5" width="4" height="5" rx="1" fill="#f7b733" stroke="#b77a1a" stroke-width="0.8"/><rect x="10.5" y="9.5" width="4" height="1.5" fill="#fbd67a"/><path d="M3.5 9.5 L7 15.5 H0 Z" fill="#f7c548" stroke="#b98a1c" stroke-width="0.8" stroke-linejoin="round"/><rect x="3" y="11.3" width="1" height="2.2" fill="#222"/><rect x="3" y="14" width="1" height="0.9" fill="#222"/></svg>
<div class="tr" style="left:48px;top:395px;color:#000;letter-spacing:0px"><span class="dec">&gt; </span>radioButton <span class="dec">[radioButton master]</span></div>
<svg style="left:12.0px;top:418px" width="7" height="9" viewBox="0 0 7 9"><path d="M1 0.8 L5.5 4.5 L1 8.2" stroke="#a0a0a0" stroke-width="1.5" fill="none"/></svg>
<svg style="left:26px;top:414px" width="16" height="16" viewBox="0 0 16 16"><path d="M3.5 4.5 V2.5 Q3.5 1.5 4.5 1.5 H8.5 Q9.5 1.5 9.5 2.5 V4.5" fill="#fdf3cf" stroke="#c9a24a" stroke-width="0.9"/><rect x="1.5" y="4" width="9" height="9.5" fill="#fbe7a8"/><path d="M0 4.5 H3" stroke="#7a6a90" stroke-width="1"/><path d="M1.2 5 V13.8 H11" stroke="#2d4fb0" stroke-width="1.1" fill="none"/><path d="M1.5 13.5 L4.5 8.5 H15.5 L12.5 13.5Z" fill="#b6d4f6" stroke="#2d4fb0" stroke-width="1"/><path d="M14.5 0.5 V5 Q14.5 6.8 12.8 6.8 Q11.8 6.8 11.3 6" stroke="#3a6ea8" stroke-width="1.3" fill="none"/><rect x="10.5" y="10.5" width="4" height="5" rx="1" fill="#f7b733" stroke="#b77a1a" stroke-width="0.8"/><rect x="10.5" y="9.5" width="4" height="1.5" fill="#fbd67a"/></svg>
<div class="tr" style="left:48px;top:413px;color:#000;letter-spacing:0px"><span class="dec">&gt; </span>randomNumber <span class="dec">[randomNumber master]</span></div>
<svg style="left:12.0px;top:436px" width="7" height="9" viewBox="0 0 7 9"><path d="M1 0.8 L5.5 4.5 L1 8.2" stroke="#a0a0a0" stroke-width="1.5" fill="none"/></svg>
<svg style="left:26px;top:432px" width="16" height="16" viewBox="0 0 16 16"><path d="M3.5 4.5 V2.5 Q3.5 1.5 4.5 1.5 H8.5 Q9.5 1.5 9.5 2.5 V4.5" fill="#fdf3cf" stroke="#c9a24a" stroke-width="0.9"/><rect x="1.5" y="4" width="9" height="9.5" fill="#fbe7a8"/><path d="M0 4.5 H3" stroke="#7a6a90" stroke-width="1"/><path d="M1.2 5 V13.8 H11" stroke="#2d4fb0" stroke-width="1.1" fill="none"/><path d="M1.5 13.5 L4.5 8.5 H15.5 L12.5 13.5Z" fill="#b6d4f6" stroke="#2d4fb0" stroke-width="1"/><path d="M14.5 0.5 V5 Q14.5 6.8 12.8 6.8 Q11.8 6.8 11.3 6" stroke="#3a6ea8" stroke-width="1.3" fill="none"/><rect x="10.5" y="10.5" width="4" height="5" rx="1" fill="#f7b733" stroke="#b77a1a" stroke-width="0.8"/><rect x="10.5" y="9.5" width="4" height="1.5" fill="#fbd67a"/><path d="M3.5 9.5 L7 15.5 H0 Z" fill="#f7c548" stroke="#b98a1c" stroke-width="0.8" stroke-linejoin="round"/><rect x="3" y="11.3" width="1" height="2.2" fill="#222"/><rect x="3" y="14" width="1" height="0.9" fill="#222"/></svg>
<div class="tr" style="left:48px;top:431px;color:#000;letter-spacing:-0.1px"><span class="dec">&gt; </span>textField <span class="dec">[textField master]</span></div>
<svg style="left:12.0px;top:454px" width="7" height="9" viewBox="0 0 7 9"><path d="M1 0.8 L5.5 4.5 L1 8.2" stroke="#a0a0a0" stroke-width="1.5" fill="none"/></svg>
<svg style="left:26px;top:450px" width="16" height="16" viewBox="0 0 16 16"><path d="M3.5 4.5 V2.5 Q3.5 1.5 4.5 1.5 H8.5 Q9.5 1.5 9.5 2.5 V4.5" fill="#fdf3cf" stroke="#c9a24a" stroke-width="0.9"/><rect x="1.5" y="4" width="9" height="9.5" fill="#fbe7a8"/><path d="M0 4.5 H3" stroke="#7a6a90" stroke-width="1"/><path d="M1.2 5 V13.8 H11" stroke="#2d4fb0" stroke-width="1.1" fill="none"/><path d="M1.5 13.5 L4.5 8.5 H15.5 L12.5 13.5Z" fill="#b6d4f6" stroke="#2d4fb0" stroke-width="1"/><path d="M14.5 0.5 V5 Q14.5 6.8 12.8 6.8 Q11.8 6.8 11.3 6" stroke="#3a6ea8" stroke-width="1.3" fill="none"/><path d="M3.5 9.5 L7 15.5 H0 Z" fill="#f7c548" stroke="#b98a1c" stroke-width="0.8" stroke-linejoin="round"/><rect x="3" y="11.3" width="1" height="2.2" fill="#222"/><rect x="3" y="14" width="1" height="0.9" fill="#222"/></svg>
<div class="tr" style="left:47.5px;top:449px;color:#000;letter-spacing:0px">Ugo</div>
<svg style="left:12.0px;top:472px" width="7" height="9" viewBox="0 0 7 9"><path d="M1 0.8 L5.5 4.5 L1 8.2" stroke="#a0a0a0" stroke-width="1.5" fill="none"/></svg>
<svg style="left:26px;top:468px" width="16" height="16" viewBox="0 0 16 16"><path d="M3.5 4.5 V2.5 Q3.5 1.5 4.5 1.5 H8.5 Q9.5 1.5 9.5 2.5 V4.5" fill="#fdf3cf" stroke="#c9a24a" stroke-width="0.9"/><rect x="1.5" y="4" width="9" height="9.5" fill="#fbe7a8"/><path d="M0 4.5 H3" stroke="#7a6a90" stroke-width="1"/><path d="M1.2 5 V13.8 H11" stroke="#2d4fb0" stroke-width="1.1" fill="none"/><path d="M1.5 13.5 L4.5 8.5 H15.5 L12.5 13.5Z" fill="#b6d4f6" stroke="#2d4fb0" stroke-width="1"/><path d="M14.5 0.5 V5 Q14.5 6.8 12.8 6.8 Q11.8 6.8 11.3 6" stroke="#3a6ea8" stroke-width="1.3" fill="none"/><rect x="10.5" y="10.5" width="4" height="5" rx="1" fill="#f7b733" stroke="#b77a1a" stroke-width="0.8"/><rect x="10.5" y="9.5" width="4" height="1.5" fill="#fbd67a"/></svg>
<div class="tr" style="left:48px;top:467px;color:#000;letter-spacing:0px"><span class="dec">&gt; </span>Utopian <span class="dec">[Utopian master]</span></div>
</div><div class="a" style="left:4px;top:683px;width:253px;height:16px;background:#f0f0f0"></div>
<div class="a" style="left:21px;top:683px;width:133px;height:16px;background:#cdcdcd"></div>
<svg style="left:9px;top:687px" width="6" height="9" viewBox="0 0 6 9"><path d="M5 0.8 L1 4.5 L5 8.2" stroke="#555" stroke-width="1.6" fill="none"/></svg>
<svg style="left:246px;top:687px" width="6" height="9" viewBox="0 0 6 9"><path d="M1 0.8 L5 4.5 L1 8.2" stroke="#555" stroke-width="1.6" fill="none"/></svg>
<div class="a" style="left:264px;top:75px;width:1068px;height:627px;background:#fff;border:1px solid #c6c9cf;border-radius:6px 6px 5px 5px;overflow:hidden"></div>
<div class="a" style="left:380px;top:76px;width:951px;height:25px;background:#cfddee;border-radius:0 6px 0 0;border-bottom:1px solid #b5bfd0"></div>
<div class="a" style="left:265px;top:76px;width:130px;height:26px;background:#fff;border-radius:6px 6px 0 0;box-shadow:inset -1px 0 0 #c8d0dc"></div>
<svg style="left:269px;top:81px" width="16" height="16" viewBox="0 0 16 16"><path d="M3.5 1.5 H10 L13.5 5 V14.5 H3.5Z" fill="#eef5fc" stroke="#a88a3a"/><path d="M10 1.5 V5 H13.5" fill="#e8d8a0" stroke="#a88a3a" stroke-width="0.8"/><path d="M9.2 4.5 V10.5 Q9.2 12.6 7.2 12.6 Q6.2 12.6 5.6 12" stroke="#2f6aa5" stroke-width="1.9" fill="none"/><path d="M3.5 9.5 L7 15.5 H0 Z" fill="#f7c548" stroke="#b98a1c" stroke-width="0.8" stroke-linejoin="round"/><rect x="3" y="11.3" width="1" height="2.2" fill="#222"/><rect x="3" y="14" width="1" height="0.9" fill="#222"/></svg>
<div class="t" style="left:288px;top:82px;color:#111;letter-spacing:-0.1px">comboBox.java</div>
<svg style="left:378px;top:84px" width="10" height="10" viewBox="0 0 10 10"><path d="M0.5 0.5 H3 L5 2.5 L7 0.5 H9.5 V3 L7.5 5 L9.5 7 V9.5 H7 L5 7.5 L3 9.5 H0.5 V7 L2.5 5 L0.5 3 Z" fill="#fff" stroke="#555" stroke-width="1"/></svg>
<svg style="left:400px;top:81px" width="16" height="16" viewBox="0 0 16 16"><path d="M3.5 1.5 H10 L13.5 5 V14.5 H3.5Z" fill="#eef5fc" stroke="#a88a3a"/><path d="M10 1.5 V5 H13.5" fill="#e8d8a0" stroke="#a88a3a" stroke-width="0.8"/><path d="M9.2 4.5 V10.5 Q9.2 12.6 7.2 12.6 Q6.2 12.6 5.6 12" stroke="#2f6aa5" stroke-width="1.9" fill="none"/></svg>
<div class="t" style="left:419px;top:82px;color:#111">Main.java</div>
<svg style="left:1284px;top:83px" width="10" height="4" viewBox="0 0 10 4"><rect x="0.5" y="0.5" width="9" height="3" fill="#fff" stroke="#606060"/></svg>
<svg style="left:1307px;top:83px" width="10" height="10" viewBox="0 0 10 10"><rect x="0.5" y="0.5" width="9" height="9" fill="#fff" stroke="#606060"/><path d="M0 2.5 H10" stroke="#606060"/></svg>
<div class="a" style="left:265px;top:101px;width:38px;height:582px;background:#fff"></div>
<div class="a" style="left:267px;top:101px;width:12px;height:582px;background:#f6f6f6"></div>
<div class="a" style="left:302px;top:101px;width:1px;height:582px;background:#f0f0f0"></div>
<div class="a" style="left:305px;top:103px;width:994px;height:15px;background:#e8f2fe"></div>
<svg style="left:267px;top:103px" width="12" height="15" viewBox="0 0 12 15"><defs><pattern id="chk" width="2" height="2" patternUnits="userSpaceOnUse"><rect width="2" height="2" fill="#b8d6fb"/><rect width="1" height="1" fill="#3d8ff5"/><rect x="1" y="1" width="1" height="1" fill="#3d8ff5"/></pattern></defs><rect width="12" height="15" fill="url(#chk)"/></svg>
<div class="a" style="left:1300px;top:101px;width:16px;height:598px;background:#f0f0f0"></div>
<div class="a" style="left:1316px;top:101px;width:15px;height:599px;background:#f8f8f8"></div>
<svg style="left:1303px;top:109px" width="9" height="6" viewBox="0 0 9 6"><path d="M0.8 5 L4.5 1 L8.2 5" stroke="#b0b0b0" stroke-width="1.6" fill="none"/></svg>
<svg style="left:1303px;top:671px" width="9" height="6" viewBox="0 0 9 6"><path d="M0.8 1 L4.5 5 L8.2 1" stroke="#b0b0b0" stroke-width="1.6" fill="none"/></svg>
<div class="a" style="left:1318px;top:107px;width:8px;height:8px;background:#f3c020;border:1px solid #d9a000"></div>
<div class="a" style="left:1316px;top:120px;width:12px;height:1px;background:#a0a0a0"></div>
<div class="a" style="left:1317px;top:138px;width:10px;height:5px;background:#fff3b0;border:1px solid #e6c85a"></div>
<div class="a" style="left:1317px;top:153px;width:10px;height:5px;background:#fff3b0;border:1px solid #e6c85a"></div>
<div class="a" style="left:1317px;top:274px;width:10px;height:5px;background:#fff3b0;border:1px solid #e6c85a"></div>
<div class="a" style="left:265px;top:683px;width:38px;height:16px;background:#f6f6f6"></div>
<div class="a" style="left:303px;top:683px;width:997px;height:16px;background:#f0f0f0"></div>
<svg style="left:308px;top:687px" width="6" height="9" viewBox="0 0 6 9"><path d="M5 0.8 L1 4.5 L5 8.2" stroke="#b8b8b8" stroke-width="1.6" fill="none"/></svg>
<svg style="left:1288px;top:687px" width="6" height="9" viewBox="0 0 6 9"><path d="M1 0.8 L5 4.5 L1 8.2" stroke="#b8b8b8" stroke-width="1.6" fill="none"/></svg>
<div class="ln" style="left:263px;top:106px">1</div>
<div class="code" style="left:305px;top:105px"><span class="k">import</span> java.awt.*;</div>
<div class="ln" style="left:263px;top:121px">4</div>
<div class="ln" style="left:263px;top:136px">5</div>
<div class="code" style="left:305px;top:135px"><span class="k">public</span> <span class="k">class</span> <span class="sq">comboBox</span> <span class="k">extends</span> JFrame {</div>
<div class="ln" style="left:263px;top:151px">6</div>
<div class="code" style="left:305px;top:150px">    <span class="k">private</span> <span class="sq">JComboBox</span> <span class="f">list</span>;</div>
<div class="ln" style="left:263px;top:166px">7</div>
<div class="code" style="left:305px;top:165px">    <span class="k">private</span> <span class="k">static</span> String[] <span class="fi">colornames</span> = {<span class="s">"Yellow"</span>, <span class="s">"Red"</span>, <span class="s">"Orange"</span>, <span class="s">"Green"</span>};</div>
<div class="ln" style="left:263px;top:181px">8</div>
<div class="code" style="left:305px;top:180px">    <span class="k">private</span> <span class="k">static</span> Color[] <span class="fi">colors</span> = {Color.<span class="fb">YELLOW</span>, Color.<span class="fb">RED</span>, Color.<span class="fb">ORANGE</span>, Color.<span class="fb">GREEN</span>};</div>
<div class="ln" style="left:263px;top:196px">9</div>
<div class="ln" style="left:263px;top:211px">10</div>
<div class="code" style="left:305px;top:210px">    <span class="k">public</span> comboBox() {</div>
<div class="ln" style="left:263px;top:226px">11</div>
<div class="code" style="left:305px;top:225px">        <span class="k">super</span>(<span class="s">"JComboBox Demo"</span>);</div>
<div class="ln" style="left:263px;top:241px">12</div>
<div class="code" style="left:305px;top:240px">        setLayout(<span class="k">new</span> FlowLayout());</div>
<div class="ln" style="left:263px;top:256px">13</div>
<div class="ln" style="left:263px;top:271px">14</div>
<div class="code" style="left:305px;top:270px">        <span class="f">list</span> = <span class="sq"><span class="k">new</span> JComboBox(<span class="fi">colornames</span>)</span>;</div>
<div class="ln" style="left:263px;top:286px">15</div>
<div class="code" style="left:305px;top:285px">        <span class="f">list</span>.addItemListener(</div>
<div class="ln" style="left:263px;top:301px">16</div>
<div class="code" style="left:305px;top:300px">                <span class="k">new</span> ItemListener() {</div>
<div class="ln" style="left:263px;top:316px">17</div>
<div class="code" style="left:305px;top:315px">                    <span class="k">public</span> <span class="k">void</span> itemStateChanged(ItemEvent event) {</div>
<div class="ln" style="left:263px;top:331px">18</div>
<div class="code" style="left:305px;top:330px">                        getContentPane().setBackground(<span class="fi">colors</span>[<span class="f">list</span>.getSelectedIndex()]);</div>
<div class="ln" style="left:263px;top:346px">19</div>
<div class="code" style="left:305px;top:345px">                    }</div>
<div class="ln" style="left:263px;top:361px">20</div>
<div class="code" style="left:305px;top:360px">                }</div>
<div class="ln" style="left:263px;top:376px">21</div>
<div class="code" style="left:305px;top:375px">                );</div>
<div class="ln" style="left:263px;top:391px">22</div>
<div class="code" style="left:305px;top:390px">        add(<span class="f">list</span>);</div>
<div class="ln" style="left:263px;top:406px">23</div>
<div class="code" style="left:305px;top:405px">    }</div>
<div class="ln" style="left:263px;top:421px">24</div>
<div class="code" style="left:305px;top:420px">}</div>
<div class="ln" style="left:263px;top:436px">25</div>
<svg style="left:0;top:0" width="1366" height="768"><path d="M396.5 145.5 L398.5 147.5 L400.5 145.5 L402.5 147.5 L404.5 145.5 L406.5 147.5 L408.5 145.5 L410.5 147.5 L412.5 145.5 L414.5 147.5 L416.5 145.5 L418.5 147.5 L420.5 145.5 L422.5 147.5 L424.5 145.5 L426.5 147.5 L428.5 145.5 L430.5 147.5 L432.5 145.5 L434.5 147.5 L436.5 145.5 L438.5 147.5 L440.5 145.5 L442.5 147.5 L444.5 145.5 L446.5 147.5 L448.5 145.5 L450.5 147.5 L452.5 145.5" stroke="#f2b619" stroke-width="1" fill="none" opacity="0.9"/></svg><svg style="left:0;top:0" width="1366" height="768"><path d="M389.5 160.5 L391.5 162.5 L393.5 160.5 L395.5 162.5 L397.5 160.5 L399.5 162.5 L401.5 160.5 L403.5 162.5 L405.5 160.5 L407.5 162.5 L409.5 160.5 L411.5 162.5 L413.5 160.5 L415.5 162.5 L417.5 160.5 L419.5 162.5 L421.5 160.5 L423.5 162.5 L425.5 160.5 L427.5 162.5 L429.5 160.5 L431.5 162.5 L433.5 160.5 L435.5 162.5 L437.5 160.5 L439.5 162.5 L441.5 160.5 L443.5 162.5 L445.5 160.5 L447.5 162.5 L449.5 160.5 L451.5 162.5 L453.5 160.5" stroke="#f2b619" stroke-width="1" fill="none" opacity="0.9"/></svg><svg style="left:0;top:0" width="1366" height="768"><path d="M410.5 280.5 L412.5 282.5 L414.5 280.5 L416.5 282.5 L418.5 280.5 L420.5 282.5 L422.5 280.5 L424.5 282.5 L426.5 280.5 L428.5 282.5 L430.5 280.5 L432.5 282.5 L434.5 280.5 L436.5 282.5 L438.5 280.5 L440.5 282.5 L442.5 280.5 L444.5 282.5 L446.5 280.5 L448.5 282.5 L450.5 280.5 L452.5 282.5 L454.5 280.5 L456.5 282.5 L458.5 280.5 L460.5 282.5 L462.5 280.5 L464.5 282.5 L466.5 280.5 L468.5 282.5 L470.5 280.5 L472.5 282.5 L474.5 280.5 L476.5 282.5" stroke="#f2b619" stroke-width="1" fill="none" opacity="0.9"/></svg><div class="a" style="left:431px;top:105px;width:8px;height:13px;border:1px solid #808080"></div>
<svg style="left:433px;top:114px" width="5" height="2" viewBox="0 0 5 2"><rect x="0" y="0" width="1" height="1" fill="#666"/><rect x="3" y="0" width="1" height="1" fill="#666"/></svg>
<svg style="left:293px;top:106px" width="9" height="9" viewBox="0 0 9 9"><circle cx="4.5" cy="4.5" r="4.2" fill="#d3e2f1" stroke="#a4b2c2" stroke-width="0.8"/><rect x="2" y="4" width="5" height="1.2" fill="#24364a"/><rect x="3.9" y="2" width="1.2" height="5" fill="#24364a"/></svg>
<svg style="left:293px;top:211px" width="9" height="9" viewBox="0 0 9 9"><circle cx="4.5" cy="4.5" r="4.2" fill="#d3e2f1" stroke="#a4b2c2" stroke-width="0.8"/><rect x="2" y="4" width="5" height="1.2" fill="#6a7a8c"/></svg>
<svg style="left:293px;top:301px" width="9" height="9" viewBox="0 0 9 9"><circle cx="4.5" cy="4.5" r="4.2" fill="#d3e2f1" stroke="#a4b2c2" stroke-width="0.8"/><rect x="2" y="4" width="5" height="1.2" fill="#6a7a8c"/></svg>
<svg style="left:293px;top:316px" width="9" height="9" viewBox="0 0 9 9"><circle cx="4.5" cy="4.5" r="4.2" fill="#d3e2f1" stroke="#a4b2c2" stroke-width="0.8"/><rect x="2" y="4" width="5" height="1.2" fill="#6a7a8c"/></svg>
<svg style="left:267px;top:134px" width="12.5" height="12.5" viewBox="0 0 14 14"><path d="M5 0.8 Q8.8 0.8 8.8 4.6 Q8.8 6.6 7 8 V9.5 H3 V8 Q1.2 6.6 1.2 4.6 Q1.2 0.8 5 0.8Z" fill="#fff4c0" stroke="#eeb23a" stroke-width="1.2"/><rect x="3" y="9.5" width="4" height="2.5" rx="1" fill="#8c9cb0"/><path d="M9 5.8 L12.6 12.2 Q12.8 13 12 13 H6 Q5.2 13 5.4 12.2Z" fill="#f9d36a" stroke="#d09a30" stroke-width="0.9"/><rect x="8.5" y="7.8" width="1.1" height="2.8" fill="#2a2a2a"/><rect x="8.5" y="11.2" width="1.1" height="1" fill="#2a2a2a"/></svg><svg style="left:267px;top:149px" width="12.5" height="12.5" viewBox="0 0 14 14"><path d="M5 0.8 Q8.8 0.8 8.8 4.6 Q8.8 6.6 7 8 V9.5 H3 V8 Q1.2 6.6 1.2 4.6 Q1.2 0.8 5 0.8Z" fill="#fff4c0" stroke="#eeb23a" stroke-width="1.2"/><rect x="3" y="9.5" width="4" height="2.5" rx="1" fill="#8c9cb0"/><path d="M9 5.8 L12.6 12.2 Q12.8 13 12 13 H6 Q5.2 13 5.4 12.2Z" fill="#f9d36a" stroke="#d09a30" stroke-width="0.9"/><rect x="8.5" y="7.8" width="1.1" height="2.8" fill="#2a2a2a"/><rect x="8.5" y="11.2" width="1.1" height="1" fill="#2a2a2a"/></svg><svg style="left:267px;top:269px" width="12.5" height="12.5" viewBox="0 0 14 14"><path d="M5 0.8 Q8.8 0.8 8.8 4.6 Q8.8 6.6 7 8 V9.5 H3 V8 Q1.2 6.6 1.2 4.6 Q1.2 0.8 5 0.8Z" fill="#fff4c0" stroke="#eeb23a" stroke-width="1.2"/><rect x="3" y="9.5" width="4" height="2.5" rx="1" fill="#8c9cb0"/><path d="M9 5.8 L12.6 12.2 Q12.8 13 12 13 H6 Q5.2 13 5.4 12.2Z" fill="#f9d36a" stroke="#d09a30" stroke-width="0.9"/><rect x="8.5" y="7.8" width="1.1" height="2.8" fill="#2a2a2a"/><rect x="8.5" y="11.2" width="1.1" height="1" fill="#2a2a2a"/></svg><svg style="left:268px;top:317px" width="10" height="6" viewBox="0 0 10 6"><path d="M0.8 5.5 L5 0.8 L9.2 5.5Z" fill="none" stroke="#4a28b0" stroke-width="1.1"/></svg>
<div class="a" style="left:1333px;top:75px;width:32px;height:80px;background:#e3e7f5;border:1px solid #c4c8d2;box-shadow:inset 0 0 0 1px #fff;border-radius:4px"></div>
<div class="a" style="left:1333px;top:157px;width:32px;height:211px;background:#e3e7f5;border:1px solid #c4c8d2;box-shadow:inset 0 0 0 1px #fff;border-radius:4px"></div>
<svg style="left:1341px;top:81px" width="16" height="3" viewBox="0 0 16 3"><rect x="0" y="0" width="2" height="2" fill="#a8a08a"/><rect x="4" y="0" width="2" height="2" fill="#a8a08a"/><rect x="9" y="0" width="2" height="2" fill="#a8a08a"/><rect x="13" y="0" width="2" height="2" fill="#a8a08a"/></svg>
<svg style="left:1344px;top:92px" width="10" height="9" viewBox="0 0 10 9"><rect x="3" y="0.5" width="6.5" height="5" fill="#fff" stroke="#555"/><rect x="3" y="0.5" width="6.5" height="1.5" fill="#555"/><rect x="0.5" y="3.5" width="6.5" height="5" fill="#fff" stroke="#555"/><rect x="0.5" y="3.5" width="6.5" height="1.5" fill="#555"/></svg>
<svg style="left:1341px;top:110px" width="16" height="16" viewBox="0 0 16 16"><rect x="0.5" y="0.5" width="5" height="5" fill="#dbe8f6" stroke="#2f6cc0"/><rect x="0.5" y="9.5" width="5" height="5" fill="#dbe8f6" stroke="#2f6cc0"/><rect x="7" y="6" width="3" height="3" fill="#fff" stroke="#2f6cc0" stroke-width="0.8"/><path d="M7 2.5 H14 M11 7.5 H15 M7 12.5 H14" stroke="#2f6cc0" stroke-width="1.2"/><path d="M3 5.5 V9.5" stroke="#2f6cc0" stroke-width="0.6"/></svg>
<svg style="left:1342px;top:132px" width="14" height="16" viewBox="0 0 14 16"><path d="M0.5 0.5 H12.5 V14 L10 12.5 L6.5 15 L3 12.5 L0.5 14Z" fill="#e8e8e8" stroke="#555"/><path d="M3 4 H10 M3 6.5 H10 M3 9 H10" stroke="#555"/></svg>
<svg style="left:1341px;top:162px" width="16" height="3" viewBox="0 0 16 3"><rect x="0" y="0" width="2" height="2" fill="#a8a08a"/><rect x="4" y="0" width="2" height="2" fill="#a8a08a"/><rect x="9" y="0" width="2" height="2" fill="#a8a08a"/><rect x="13" y="0" width="2" height="2" fill="#a8a08a"/></svg>
<svg style="left:1344px;top:172px" width="10" height="9" viewBox="0 0 10 9"><rect x="3" y="0.5" width="6.5" height="5" fill="#fff" stroke="#555"/><rect x="3" y="0.5" width="6.5" height="1.5" fill="#555"/><rect x="0.5" y="3.5" width="6.5" height="5" fill="#fff" stroke="#555"/><rect x="0.5" y="3.5" width="6.5" height="1.5" fill="#555"/></svg>
<svg style="left:1341px;top:190px" width="16" height="16" viewBox="0 0 16 16"><rect x="0.5" y="0.5" width="11" height="15" fill="#fff" stroke="#8a8a8a"/><circle cx="6" cy="5" r="2.5" fill="#e53030"/><path d="M2.5 13 Q6 6 9.5 13Z" fill="#f0a030"/><path d="M11 1 L15 15 H10Z" fill="#dbe8f6" stroke="#6a8fc8"/></svg>
<svg style="left:1341px;top:212px" width="16" height="16" viewBox="0 0 16 16"><rect x="0.5" y="1.5" width="15" height="13" fill="#fff" stroke="#5a6a80"/><rect x="0.5" y="1.5" width="15" height="3" fill="#c8d6ea" stroke="#5a6a80"/><path d="M1 8 H15 M1 11 H15 M5 4 V14" stroke="#8a9ab0"/></svg>
<svg style="left:1341px;top:234px" width="16" height="16" viewBox="0 0 16 16"><path d="M3 1 V15 M8 1 V15 M13 1 V15" stroke="#2f6cc0" stroke-width="1.2"/><circle cx="3" cy="10" r="2.3" fill="#f0c040" stroke="#a07a20"/><circle cx="8" cy="5" r="2.3" fill="#6ab04a" stroke="#3a7a2a"/><circle cx="13" cy="9" r="2.3" fill="#6a9ad8" stroke="#2f5c9a"/></svg>
<svg style="left:1340px;top:256px" width="17" height="16" viewBox="0 0 17 16"><path d="M0.5 2 L5 0.5 L10 2 L15 0.5 V14 L10 15.5 L5 14 L0.5 15.5Z" fill="#8bc96a" stroke="#3a7a2a"/><path d="M5 0.5 V14 M10 2 V15.5" stroke="#3a7a2a"/><rect x="9" y="7" width="7" height="8" fill="#fff" stroke="#555"/><path d="M10 9 H15 M10 11 H15 M10 13 H15" stroke="#555"/></svg>
<svg style="left:1341px;top:278px" width="16" height="16" viewBox="0 0 16 16"><rect x="3.5" y="5.5" width="12" height="10" fill="#fff" stroke="#5a6a80"/><path d="M6 9 H13 M6 12 H13" stroke="#e04040"/><rect x="0.5" y="0.5" width="7" height="6" fill="#fff" stroke="#5a6a80"/><path d="M2 2 L6 6" stroke="#2f6cc0"/></svg>
<svg style="left:1341px;top:300px" width="16" height="16" viewBox="0 0 16 16"><rect x="0.5" y="1.5" width="14" height="10" rx="1.5" fill="#dbe8f6" stroke="#2f65b0" stroke-width="1.2"/><rect x="3" y="4" width="7" height="1.2" fill="#2f65b0"/><rect x="3" y="6.5" width="5" height="1.2" fill="#2f65b0"/><rect x="5" y="12" width="5" height="2" fill="#2f65b0"/><rect x="2" y="14" width="11" height="1.2" fill="#2f65b0"/></svg>
<svg style="left:1341px;top:322px" width="16" height="16" viewBox="0 0 16 16"><path d="M0.5 8 V15.5 H15.5 V8" stroke="#2f6cc0" stroke-width="1.4" fill="#dbe8f6"/><path d="M6 0 H10 V5 H13 L8 10 L3 5 H6Z" fill="#3aa03a"/></svg>
<svg style="left:1341px;top:344px" width="16" height="16" viewBox="0 0 16 16"><rect x="1" y="1" width="7" height="9" rx="2" fill="#f2c230" stroke="#c8962a" stroke-width="0.8"/><rect x="7" y="3" width="7" height="9" rx="2" fill="#f2c230" stroke="#c8962a" stroke-width="0.8"/><rect x="4" y="5" width="6" height="6" rx="2" fill="#f7d560" stroke="#c8962a" stroke-width="0.8"/><rect x="0.5" y="9.5" width="12" height="6" fill="#fff" stroke="#9aa0a8"/><text x="3.8" y="14.3" font-size="5" font-weight="bold" text-anchor="middle" fill="#333" font-family="Liberation Sans">G</text><rect x="6.2" y="10.8" width="1.1" height="3.6" fill="#d02020"/><text x="9.8" y="14.3" font-size="5" font-weight="bold" text-anchor="middle" fill="#2a8a2a" font-family="Liberation Sans">T</text></svg>
<div class="a" style="left:476px;top:177px;width:386px;height:193px;background:#ffff00;border:1px solid #1883d7;box-shadow:0 5px 18px 2px rgba(0,0,0,0.26)"></div>
<div class="a" style="left:477px;top:178px;width:384px;height:30px;background:#fff"></div>
<svg style="left:485px;top:184px" width="16" height="16" viewBox="0 0 16 16"><rect x="0.5" y="0.5" width="15" height="15" rx="2" fill="#f2f4f7" stroke="#7a8ca0"/><path d="M8 3 Q6 5 8 7 Q9 8 8 9" stroke="#e8622a" stroke-width="1.2" fill="none"/><path d="M9.5 4 Q8.5 5 9.5 6" stroke="#e8622a" stroke-width="0.9" fill="none"/><path d="M4 10 H11 M4.5 12 H10.5 M3 14 H12" stroke="#4a6f94" stroke-width="0.9"/><path d="M11 10 Q13 10.5 11 12" stroke="#4a6f94" stroke-width="0.8" fill="none"/></svg>
<div class="t" style="left:506px;top:186px;color:#111">JComboBox Demo</div>
<div class="a" style="left:742px;top:192px;width:10px;height:1px;background:#000"></div>
<div class="a" style="left:787px;top:187px;width:10px;height:10px;border:1px solid #000"></div>
<svg style="left:832px;top:186px" width="12" height="12" viewBox="0 0 12 12"><path d="M0.7 0.7 L11.3 11.3 M11.3 0.7 L0.7 11.3" stroke="#000" stroke-width="1.1"/></svg>
<div class="a" style="left:634px;top:213px;width:70px;height:25px;background:#a3b8cc;border:1px solid #7a8aab"></div>
<div class="a" style="left:635px;top:214px;width:49px;height:23px;border:1px solid #b8cfe5;border-right:none"></div>
<div class="a" style="left:684px;top:214px;width:1px;height:23px;background:#7a8aab"></div>
<div class="a" style="left:685px;top:214px;width:18px;height:23px;background:linear-gradient(#e8f0f8,#ffffff 25%,#d6e3f0 80%,#b8cfe5)"></div>
<div class="t" style="left:637px;top:219px;font-weight:bold;color:#333;font-size:12px">Yellow</div>
<svg style="left:689px;top:223px" width="10" height="6" viewBox="0 0 10 6"><path d="M0 0 H10 L5 5Z" fill="#333"/></svg>
<div class="a" style="left:620px;top:702px;width:29px;height:24px;border:1px solid #b5b9c4;border-top-color:#f4f6fb;border-left-color:#f4f6fb"></div>
<svg style="left:625px;top:706px" width="18" height="16" viewBox="0 0 18 16"><circle cx="5" cy="11" r="4.5" fill="#fff6c9" stroke="#b8a040"/><circle cx="5" cy="11" r="1.2" fill="#b8a040"/><rect x="8.5" y="6.5" width="8" height="6" fill="#dbe8f6" stroke="#6a8fc8"/><path d="M10 14 H15" stroke="#6a8fc8"/><path d="M1 6 Q3 1 8 2 L7 0 M8 2 L6 4" stroke="#d9a93a" stroke-width="1.2" fill="none"/></svg>
<div class="a" style="left:653px;top:704px;width:1px;height:21px;background:#a8acb8"></div>
<div class="t" style="left:661px;top:707px;color:#111">Writable</div>
<div class="a" style="left:757px;top:704px;width:1px;height:21px;background:#a8acb8"></div>
<div class="t" style="left:765px;top:707px;color:#111">Smart Insert</div>
<div class="a" style="left:855px;top:704px;width:1px;height:21px;background:#a8acb8"></div>
<div class="t" style="left:863px;top:707px;color:#111">1 : 1</div>
<svg style="left:951px;top:706px" width="2" height="16" viewBox="0 0 2 16"><rect x="0" y="0" width="2" height="3" fill="#a09880"/><rect x="0" y="5" width="2" height="2" fill="#a09880"/><rect x="0" y="9" width="2" height="2" fill="#a09880"/><rect x="0" y="14" width="2" height="2" fill="#a09880"/></svg>
<svg style="left:1238px;top:706px" width="2" height="16" viewBox="0 0 2 16"><rect x="0" y="0" width="2" height="3" fill="#a09880"/><rect x="0" y="5" width="2" height="2" fill="#a09880"/><rect x="0" y="9" width="2" height="2" fill="#a09880"/><rect x="0" y="14" width="2" height="2" fill="#a09880"/></svg>
<div class="a" style="left:1241px;top:703px;width:130px;height:25px;border-left:1px solid #9a9a9a;border-top:1px solid #9a9a9a"></div>
<svg style="left:1245px;top:707px" width="18" height="16" viewBox="0 0 18 16"><path d="M1 8 L6 4 H11 L13 6 L8 10 H3Z" fill="#fff" stroke="#777"/><rect x="8.5" y="7.5" width="8" height="7" fill="#f0c040" stroke="#a07a20"/><rect x="8.5" y="7.5" width="8" height="2" fill="#f9d774"/></svg>
<div class="a" style="left:1267px;top:705px;width:1px;height:20px;background:#555"></div>
<svg style="left:1277px;top:708px" width="15" height="13" viewBox="0 0 15 13"><path d="M0.8 2 L5 0.8 L10 2 L14.2 0.8 V11 L10 12.2 L5 11 L0.8 12.2Z" fill="none" stroke="#f5a030" stroke-width="1.4"/><path d="M5 1 V11 M10 2 V12" stroke="#f5a030" stroke-width="1"/></svg>
<svg style="left:1299px;top:709px" width="16" height="12" viewBox="0 0 16 12"><path d="M0 4 L8 0.5 L16 4 L8 7.5Z" fill="#f5a030"/><path d="M3.5 6 V9 Q8 12 12.5 9 V6 L8 8Z" fill="#f5a030"/><path d="M1.5 4.5 V10" stroke="#f5a030" stroke-width="1.2"/></svg>
<svg style="left:1324px;top:708px" width="13" height="13" viewBox="0 0 13 13"><path d="M1 12 L11 2" stroke="#f5a030" stroke-width="2.4" stroke-linecap="round"/><circle cx="4" cy="2" r="0.8" fill="#f5a030"/><circle cx="11" cy="7" r="0.7" fill="#f5a030"/></svg>
<svg style="left:1347px;top:708px" width="14" height="14" viewBox="0 0 14 14"><circle cx="7" cy="7" r="6.2" fill="none" stroke="#f5a030" stroke-width="1.4"/><path d="M7 2.8 L8.3 5.8 L11.3 6 L9 8 L9.8 11 L7 9.4 L4.2 11 L5 8 L2.7 6 L5.7 5.8Z" fill="none" stroke="#f5a030" stroke-width="1.1"/></svg>
<div class="a" style="left:0px;top:728px;width:1366px;height:40px;background:#020307"></div>
<div class="a" style="left:48px;top:728px;width:344px;height:40px;background:#333"></div>
<svg style="left:16px;top:740px" width="16" height="16" viewBox="0 0 16 16"><path d="M0 2.2 L6.7 1.3 V7.5 H0Z M7.5 1.2 L16 0 V7.5 H7.5Z M0 8.4 H6.7 V14.7 L0 13.8Z M7.5 8.4 H16 V16 L7.5 14.8Z" fill="#fff"/></svg>
<div class="t" style="left:60px;top:740px;color:#a8a8a8;font-size:15px;line-height:18px;letter-spacing:-0.15px">Search the web and Windows</div>
<svg style="left:405px;top:740px" width="22" height="17" viewBox="0 0 22 17"><rect x="4.5" y="1.5" width="13" height="14" rx="1" fill="none" stroke="#fff" stroke-width="1.4"/><path d="M1 4 V13 M21 4 V13" stroke="#fff" stroke-width="1.2"/></svg>
<svg style="left:457px;top:737px" width="19" height="24" viewBox="0 0 19 24"><rect x="0.5" y="0.5" width="18" height="23" fill="#fff"/><rect x="2.5" y="2.5" width="14" height="5" fill="#000"/><rect x="2.5" y="9.5" width="2.5" height="2.2" fill="#000"/><rect x="2.5" y="13.1" width="2.5" height="2.2" fill="#000"/><rect x="2.5" y="16.7" width="2.5" height="2.2" fill="#000"/><rect x="2.5" y="20.3" width="2.5" height="2.2" fill="#000"/><rect x="6.5" y="9.5" width="2.5" height="2.2" fill="#000"/><rect x="6.5" y="13.1" width="2.5" height="2.2" fill="#000"/><rect x="6.5" y="16.7" width="2.5" height="2.2" fill="#000"/><rect x="6.5" y="20.3" width="2.5" height="2.2" fill="#000"/><rect x="10.5" y="9.5" width="2.5" height="2.2" fill="#000"/><rect x="10.5" y="13.1" width="2.5" height="2.2" fill="#000"/><rect x="10.5" y="16.7" width="2.5" height="2.2" fill="#000"/><rect x="10.5" y="20.3" width="2.5" height="2.2" fill="#000"/><rect x="14.5" y="9.5" width="2.5" height="2.2" fill="#000"/><rect x="14.5" y="13.1" width="2.5" height="2.2" fill="#000"/><rect x="14.5" y="16.7" width="2.5" height="2.2" fill="#000"/><rect x="14.5" y="20.3" width="2.5" height="2.2" fill="#000"/></svg>
<svg style="left:504px;top:737px" width="22" height="21" viewBox="0 0 22 21"><path d="M0.5 3 H8 L10 5 H21.5 V20.5 H0.5Z" fill="#f8d775"/><rect x="0.5" y="7" width="21" height="13.5" fill="#fbe08c"/><rect x="3" y="9" width="16" height="3" fill="#fff"/><path d="M7 20.5 V15 H15 V20.5 M9 20.5 V17 H13 V20.5" fill="#2d9fe8"/></svg>
<svg style="left:552px;top:737px" width="23" height="23" viewBox="0 0 23 23"><ellipse cx="11.5" cy="11.5" rx="11" ry="11.2" fill="#e3172b"/><ellipse cx="11.5" cy="11.5" rx="4.2" ry="7.5" fill="#000"/><ellipse cx="11.5" cy="11.5" rx="3.3" ry="7" fill="#000"/></svg>
<svg style="left:601px;top:735px" width="22" height="26" viewBox="0 0 22 26"><path d="M1 9 H21 L20 25 H2Z" fill="#fff"/><path d="M7 9 V5 Q7 1.5 11 1.5 Q15 1.5 15 5 V9" stroke="#fff" stroke-width="1.6" fill="none"/><rect x="6" y="12" width="4.5" height="4.5" fill="#000"/><rect x="11.5" y="12" width="4.5" height="4.5" fill="#000"/><rect x="6" y="17.5" width="4.5" height="4.5" fill="#000"/><rect x="11.5" y="17.5" width="4.5" height="4.5" fill="#000"/></svg>
<svg style="left:650px;top:736px" width="24" height="23" viewBox="0 0 24 23"><rect x="9" y="5" width="14" height="13" fill="#fff"/><path d="M9 6 L16 11 L23 6" stroke="#0072c6" stroke-width="1.5" fill="none"/><path d="M0 3 L13 0.5 V22.5 L0 20Z" fill="#0072c6"/><ellipse cx="6.5" cy="11.5" rx="3.3" ry="4" fill="none" stroke="#fff" stroke-width="1.8"/></svg>
<svg style="left:700px;top:737px" width="23" height="23" viewBox="0 0 23 23"><circle cx="11.5" cy="11.5" r="11.2" fill="#db4437"/><path d="M11.5 11.5 L1.8 17.1 A11.2 11.2 0 0 0 11.5 22.7Z" fill="#0f9d58"/><path d="M11.5 11.5 L11.5 22.7 A11.2 11.2 0 0 0 21.2 6 L11.5 6Z" fill="#0f9d58"/><path d="M11.5 11.5 L21.2 6 A11.2 11.2 0 0 1 11.5 22.7Z" fill="#ffcd40"/><path d="M11.5 11.5 L1.8 17.1 A11.2 11.2 0 0 1 1.8 5.9 L11.5 5.9Z" fill="#db4437"/><circle cx="11.5" cy="11.5" r="5.2" fill="#fff"/><circle cx="11.5" cy="11.5" r="4.1" fill="#4285f4"/></svg>
<svg style="left:748px;top:736px" width="24" height="24" viewBox="0 0 24 24"><rect x="0" y="0" width="24" height="24" rx="1.5" fill="#5a3c8c"/><rect x="10.5" y="1.5" width="3" height="4" fill="#d8d8d8" transform="rotate(0 12 12)"/><rect x="10.5" y="1.5" width="3" height="4" fill="#d8d8d8" transform="rotate(45 12 12)"/><rect x="10.5" y="1.5" width="3" height="4" fill="#d8d8d8" transform="rotate(90 12 12)"/><rect x="10.5" y="1.5" width="3" height="4" fill="#d8d8d8" transform="rotate(135 12 12)"/><rect x="10.5" y="1.5" width="3" height="4" fill="#d8d8d8" transform="rotate(180 12 12)"/><rect x="10.5" y="1.5" width="3" height="4" fill="#d8d8d8" transform="rotate(225 12 12)"/><rect x="10.5" y="1.5" width="3" height="4" fill="#d8d8d8" transform="rotate(270 12 12)"/><rect x="10.5" y="1.5" width="3" height="4" fill="#d8d8d8" transform="rotate(315 12 12)"/><circle cx="12" cy="12" r="8" fill="#d8d8d8"/><circle cx="12" cy="12" r="6.3" fill="#2a2430"/><text x="12" y="10.5" font-size="6.5" font-weight="bold" text-anchor="middle" fill="#f08a20" font-family="Liberation Sans">Java EE</text><text x="12" y="17" font-size="6.5" font-weight="bold" text-anchor="middle" fill="#f08a20" font-family="Liberation Sans">IDE</text></svg>
<svg style="left:797px;top:737px" width="23" height="22" viewBox="0 0 23 22"><rect x="9" y="2" width="14" height="18" fill="#fff"/><path d="M11 6 H21 M11 9 H21 M11 12 H21 M11 15 H21" stroke="#2b579a" stroke-width="1.4"/><path d="M0 2.5 L13 0 V22 L0 19.5Z" fill="#2b579a"/><path d="M2.5 7 L4 15 L6.5 9 L9 15 L10.5 7" stroke="#fff" stroke-width="1.5" fill="none"/></svg>
<svg style="left:845px;top:735px" width="25" height="25" viewBox="0 0 25 25"><path d="M12 4 Q1 4 1 13 Q1 21 9 21 Q12 21 11 18 Q10 15 14 15 Q22 15 22 10 Q22 4 12 4Z" fill="#cfe2f3" stroke="#8fb0cc"/><circle cx="6" cy="12" r="2" fill="#3a7ad0"/><circle cx="8" cy="8" r="1.8" fill="#e03030"/><circle cx="13" cy="7.5" r="1.8" fill="#40a040"/><circle cx="17" cy="10" r="1.6" fill="#f0c030"/><path d="M14 19 L24 2" stroke="#c8863a" stroke-width="2.5"/><path d="M23 1 L25 3" stroke="#e0b060" stroke-width="2"/></svg>
<div class="a" style="left:883px;top:728px;width:48px;height:40px;background:#36393d"></div>
<svg style="left:895px;top:736px" width="24" height="24" viewBox="0 0 24 24"><defs><linearGradient id="jg" x1="0" y1="0" x2="0" y2="1"><stop offset="0" stop-color="#ffffff"/><stop offset="0.5" stop-color="#e9e9e9"/><stop offset="1" stop-color="#fbfbfb"/></linearGradient></defs><rect x="0.5" y="0.5" width="23" height="23" rx="3.5" fill="url(#jg)" stroke="#9aa4b0" stroke-width="0.6"/><path d="M12.5 3 Q9 6.5 11.5 10 Q13 12.5 11 15" stroke="#e8702a" stroke-width="1.3" fill="none"/><path d="M15 5 Q12.5 8 14.5 11 Q15.5 12.5 14 14" stroke="#e8702a" stroke-width="1.1" fill="none"/><path d="M6.5 15 H16.5 M7.5 17 H15.5 M9 19 H14" stroke="#5f7f9f" stroke-width="1.2"/><path d="M16.5 14.5 Q19 14.5 18 16.5 Q17.3 17.5 15.5 17.5" stroke="#5f7f9f" stroke-width="1" fill="none"/><path d="M5 20.5 Q12 23.5 18.5 20.5" stroke="#5f7f9f" stroke-width="1.2" fill="none"/></svg>
<div class="a" style="left:495px;top:766px;width:40px;height:2px;background:#76b9ed"></div>
<div class="a" style="left:691px;top:766px;width:40px;height:2px;background:#76b9ed"></div>
<div class="a" style="left:740px;top:766px;width:40px;height:2px;background:#76b9ed"></div>
<div class="a" style="left:789px;top:766px;width:40px;height:2px;background:#76b9ed"></div>
<div class="a" style="left:838px;top:766px;width:40px;height:2px;background:#76b9ed"></div>
<div class="a" style="left:883px;top:766px;width:48px;height:2px;background:#76b9ed"></div>
<svg style="left:1117px;top:743px" width="13" height="8" viewBox="0 0 13 8"><path d="M0.8 7 L6.5 1.2 L12.2 7" stroke="#fff" stroke-width="1.3" fill="none"/></svg>
<svg style="left:1139px;top:740px" width="16" height="16" viewBox="0 0 16 16"><rect x="0" y="0" width="16" height="16" rx="2" fill="#e86a1a"/><path d="M8 2 Q6 4 8 6 Q9 7 8 8" stroke="#fff" stroke-width="1.1" fill="none"/><path d="M4 10 H12 M4 12 H12 M3 14 H13" stroke="#fff" stroke-width="0.9"/></svg>
<svg style="left:1162px;top:740px" width="18" height="14" viewBox="0 0 18 14"><rect x="5.5" y="3.5" width="11" height="8" fill="none" stroke="#fff"/><rect x="7" y="5" width="6" height="5" fill="#fff"/><rect x="16.5" y="5.5" width="1.5" height="4" fill="#fff"/><path d="M2 0 V3 M4 0 V3 M1 3 H5 V5 Q3 7 3 9 V13" stroke="#fff" stroke-width="1" fill="none"/></svg>
<svg style="left:1190px;top:741px" width="13" height="13" viewBox="0 0 13 13"><path d="M1 12 Q1 1 12 1 M3.5 12 Q3.5 3.5 12 3.5 M6 12 Q6 6 12 6 M8.5 12 Q8.5 8.5 12 8.5" stroke="#fff" stroke-width="1" fill="none"/><rect x="9" y="9" width="4" height="4" fill="#fff"/></svg>
<svg style="left:1211px;top:740px" width="17" height="15" viewBox="0 0 17 15"><path d="M0.5 5 H3.5 L8 1 V14 L3.5 10 H0.5Z" fill="none" stroke="#fff" stroke-width="1"/><path d="M10 5 Q11.5 7.5 10 10 M12 3 Q14.5 7.5 12 12 M14.5 1 Q18 7.5 14.5 14" stroke="#fff" stroke-width="1" fill="none"/></svg>
<svg style="left:1235px;top:738px" width="17" height="19" viewBox="0 0 17 19"><path d="M0.5 0.5 H16.5 V13.5 H11 L8.5 17 L6 13.5 H0.5Z" fill="#fff"/><path d="M3 4 H14 M3 7 H14 M3 10 H10" stroke="#000" stroke-width="1"/></svg>
<div class="t" style="left:1261px;top:740px;color:#fff;font-size:11.5px;letter-spacing:-0.3px">ENG</div>
<div class="t" style="left:1305px;top:732px;color:#fff;font-size:11.5px;letter-spacing:-0.1px">3:39 PM</div>
<div class="t" style="left:1301px;top:748px;color:#fff;font-size:11.5px;letter-spacing:-0.05px">1/24/2018</div>
<div class="a" style="left:1361px;top:728px;width:1px;height:40px;background:#5a5a5a"></div>
</body></html>
